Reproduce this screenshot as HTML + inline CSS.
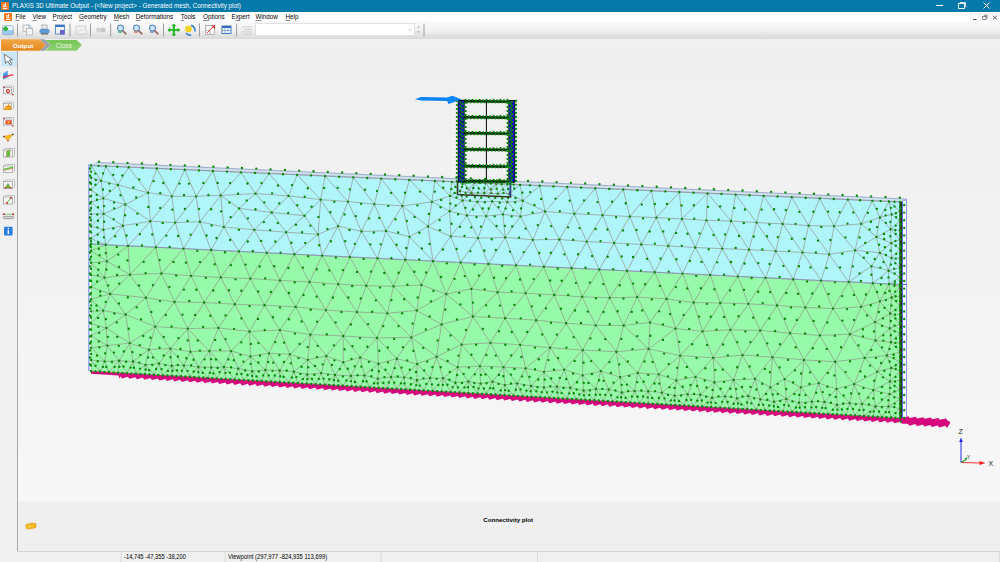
<!DOCTYPE html><html><head><meta charset="utf-8"><style>
*{margin:0;padding:0;box-sizing:border-box}
body{width:1000px;height:562px;overflow:hidden;background:#f0f0f0;font-family:"Liberation Sans",sans-serif;position:relative}
.vp{position:absolute;left:0;top:0}
.t{position:absolute;white-space:nowrap;line-height:1;font-family:"Liberation Sans",sans-serif}
u{text-decoration-color:#8a8a8a;text-decoration-thickness:0.6px;text-underline-offset:0.5px}
.ax{position:absolute;font-size:7px;line-height:1;color:#222}
</style></head><body>
<svg class="vp" width="1000" height="562" viewBox="0 0 1000 562">
<rect x="0" y="0" width="1000" height="12" fill="#0579a9"/>
<rect x="1" y="2" width="8" height="8" rx="1" fill="#f07a20"/><path d="M3 8.5h4M4 4v2.5M5.5 3.2v2.5M3.3 7.2q1.7-2 3.4 0" stroke="#fff" stroke-width="1" fill="none"/>
<path d="M936 5.5h7" stroke="#fff" stroke-width="1"/>
<rect x="958.5" y="3.5" width="6" height="5" fill="none" stroke="#fff" stroke-width="0.9"/><path d="M960 2.5h5.5v4.5" stroke="#fff" stroke-width="0.8" fill="none"/>
<path d="M983.5 2.5l6 6M989.5 2.5l-6 6" stroke="#fff" stroke-width="1"/>
<rect x="0" y="12" width="1000" height="9" fill="#ffffff"/>
<rect x="4" y="13" width="8" height="8" rx="1" fill="#f07a20"/><path d="M6 19.5h4M7 15v2.5M8.5 14.2v2.5M6.3 18.2q1.7-2 3.4 0" stroke="#fff" stroke-width="1" fill="none"/>
<rect x="970.5" y="13.5" width="8.5" height="8" fill="#fff" stroke="#e4e4e4" stroke-width="0.6"/>
<rect x="980.5" y="13.5" width="8.5" height="8" fill="#fff" stroke="#e4e4e4" stroke-width="0.6"/>
<rect x="990.5" y="13.5" width="8.5" height="8" fill="#fff" stroke="#e4e4e4" stroke-width="0.6"/>
<path d="M973 19.5h3.5" stroke="#3a4a5a" stroke-width="1"/>
<rect x="982.7" y="16.3" width="3.3" height="3.3" fill="none" stroke="#3a4a5a" stroke-width="0.7"/><path d="M983.8 15.2h3.3v3.3" fill="none" stroke="#3a4a5a" stroke-width="0.7"/>
<path d="M992.8 15.8l4 3.6M996.8 15.8l-4 3.6" stroke="#3a4a5a" stroke-width="0.9"/>
<defs><linearGradient id="tbg" x1="0" y1="0" x2="0" y2="1"><stop offset="0" stop-color="#fbfbfb"/><stop offset="0.45" stop-color="#f3f3f3"/><stop offset="1" stop-color="#d9d9d9"/></linearGradient><linearGradient id="og" x1="0" y1="0" x2="0" y2="1"><stop offset="0" stop-color="#f3a747"/><stop offset="1" stop-color="#e58a1e"/></linearGradient><linearGradient id="cg" x1="0" y1="0" x2="0" y2="1"><stop offset="0" stop-color="#76c455"/><stop offset="1" stop-color="#8fd070"/></linearGradient><linearGradient id="vbg" x1="0" y1="0" x2="0" y2="1"><stop offset="0" stop-color="#efefef"/><stop offset="1" stop-color="#f7f7f7"/></linearGradient></defs>
<rect x="0" y="21" width="1000" height="18" fill="url(#tbg)"/>
<path d="M17.5 23.5v13" stroke="#8a8a8a" stroke-width="0.8"/>
<path d="M70 23.5v13" stroke="#8a8a8a" stroke-width="0.8"/>
<path d="M90.5 23.5v13" stroke="#8a8a8a" stroke-width="0.8"/>
<path d="M110.7 23.5v13" stroke="#8a8a8a" stroke-width="0.8"/>
<path d="M163.5 23.5v13" stroke="#8a8a8a" stroke-width="0.8"/>
<path d="M199.5 23.5v13" stroke="#8a8a8a" stroke-width="0.8"/>
<path d="M236.6 23.5v13" stroke="#8a8a8a" stroke-width="0.8"/>
<path d="M424 23.5v13" stroke="#8a8a8a" stroke-width="0.8"/>
<rect x="2.5" y="25.8" width="10.8" height="9" rx="1.6" fill="#9ccaf0" stroke="#7a98b8" stroke-width="0.6"/><rect x="3" y="26.3" width="9.8" height="3.8" rx="1" fill="#eef6fc"/><path d="M2.6 28.8l3-2.8 3 2.8-3 2.8z" fill="#2cb52c"/>
<rect x="23" y="25" width="6" height="6.5" fill="#f4f4f4" stroke="#aaa" stroke-width="0.7"/><rect x="26.5" y="28.5" width="6" height="6.5" fill="#f4f4f4" stroke="#aaa" stroke-width="0.7"/><path d="M28 24.5l4 4" stroke="#5aa0e0" stroke-width="0.9"/>
<rect x="42" y="25" width="5" height="4" fill="#eee" stroke="#888" stroke-width="0.6"/><rect x="39.5" y="29" width="10" height="4.5" rx="1.5" fill="#5a9ad8"/><rect x="41" y="33" width="7" height="1.6" fill="#777"/>
<rect x="55.5" y="25" width="9" height="9" fill="#f0f4f8" stroke="#3a78c0" stroke-width="0.8"/><rect x="55.5" y="25" width="9" height="2" fill="#3a78c0"/><rect x="60" y="30" width="4.5" height="4.5" fill="#6a60c8"/>
<rect x="76" y="26" width="10" height="8" fill="#f2f2f2" stroke="#c4c4c4" stroke-width="0.7"/><path d="M77 33l3-4 2 2 3-3" stroke="#c8c8c8" stroke-width="0.6" fill="none"/>
<circle cx="98.5" cy="30" r="2.5" fill="#d4d4d4"/><circle cx="103" cy="30" r="2.5" fill="#c8c8c8"/>
<circle cx="120.5" cy="28" r="3" fill="#cfe6fa" stroke="#3c7cc0" stroke-width="1"/><path d="M122.5 30.5l3.8 3.8" stroke="#8a5a5a" stroke-width="1.6"/><path d="M118 32h4" stroke="#2aa84a" stroke-width="1.2"/>
<circle cx="136.5" cy="28" r="3" fill="#cfe6fa" stroke="#3c7cc0" stroke-width="1"/><path d="M138.5 30.5l3.8 3.8" stroke="#8a5a5a" stroke-width="1.6"/><path d="M134 32h4" stroke="#e05a2a" stroke-width="1.2"/>
<circle cx="152.5" cy="28" r="3" fill="#cfe6fa" stroke="#3c7cc0" stroke-width="1"/><path d="M154.5 30.5l3.8 3.8" stroke="#8a5a5a" stroke-width="1.6"/><path d="M150 32h4" stroke="#4a80c0" stroke-width="1.2"/>
<path d="M173.9 24.5v11M168.5 30h11" stroke="#2fb82f" stroke-width="2.2"/><path d="M171.5 26l2.4-2.4 2.4 2.4zM171.5 34l2.4 2.4 2.4-2.4zM170 27.6l-2.4 2.4 2.4 2.4zM177.8 27.6l2.4 2.4-2.4 2.4z" fill="#2fb82f"/>
<path d="M191 25.5a5 5 0 0 1 4 6" stroke="#3a8ad8" stroke-width="1.8" fill="none"/><path d="M186 33a5 5 0 0 0 5 2" stroke="#3a8ad8" stroke-width="1.8" fill="none"/><circle cx="188.5" cy="29" r="3.3" fill="#f2d020"/>
<rect x="205.5" y="25.5" width="9" height="9" fill="#f6f6f6" stroke="#999" stroke-width="0.7"/><path d="M205.5 30.5h4.5v4" stroke="#999" stroke-width="0.6" fill="none"/><path d="M207 33l7-7" stroke="#e02020" stroke-width="0.9"/><path d="M211.5 25.5h3.5v3.5z" fill="#e02020"/>
<rect x="222" y="26" width="9" height="7.5" fill="#fff" stroke="#2f6db8" stroke-width="0.9"/><rect x="222" y="26" width="9" height="2" fill="#2f6db8"/><path d="M222 30.5h9M225 28v5.5M228 28v5.5" stroke="#2f6db8" stroke-width="0.5"/>
<path d="M242 27h10M244 29.5h8M242 32h10M244 34.5h8" stroke="#cdcdcd" stroke-width="1.1"/>
<rect x="255.5" y="23.5" width="159" height="12" fill="#fff" stroke="#d8d8d8" stroke-width="0.7"/>
<path d="M408 29l2 1.8 2-1.8" stroke="#b4b4b4" stroke-width="0.6" fill="none"/>
<path d="M417.2 27.5l1.3-1.3 1.3 1.3zM417.2 31.5l1.3 1.3 1.3-1.3z" fill="#8a8a8a"/>
<rect x="0" y="39" width="1000" height="12" fill="#f0f0f0"/>
<rect x="18" y="51" width="982" height="450" fill="url(#vbg)"/>
<rect x="18" y="501" width="982" height="50" fill="#efefef"/>
<path d="M17.5 51v501" stroke="#a0a0a0" stroke-width="0.9"/>
<path d="M17 551.5h983" stroke="#d4d4d4" stroke-width="1"/>
<path d="M26 524.5l6-1.5 4 0.5v4l-6 1.5-4-0.5z" fill="#f6b820" stroke="#e08a10" stroke-width="0.5"/><path d="M28 526.5h3" stroke="#fff6a0" stroke-width="0.7"/>
<path d="M121 552v10" stroke="#d8d8d8" stroke-width="0.9"/>
<path d="M225.2 552v10" stroke="#d8d8d8" stroke-width="0.9"/>
<path d="M381 552v10" stroke="#d8d8d8" stroke-width="0.9"/>
<path d="M537.5 552v10" stroke="#d8d8d8" stroke-width="0.9"/>
<path d="M999.3 552v10" stroke="#d8d8d8" stroke-width="0.9"/>
<path d="M1 39.2h38.6l6.3 5.8-6.3 5.8H1z" fill="url(#og)"/>
<path d="M39.6 39.2h5l6 5.8-6 5.8h-5l6.3-5.8z" fill="#9aa0aa"/>
<path d="M45.5 40h31l5.4 5-5.4 5.8h-31l5.2-5.8z" fill="url(#cg)"/>
<rect x="1" y="52" width="16" height="14.5" fill="#cce6fa"/>
<path d="M4.3 54.3l1.2 9.2 2.2-2.4 2.6 3.9 1.6-1-2.6-3.9 3.1-0.6z" fill="#fafafa" stroke="#5a5a5a" stroke-width="0.8"/>
<path d="M3.2 73.5l4.5-2.8v6.5l-4.5 2.3z" fill="#3a8ae0"/><path d="M3.2 73.5l4.5-2.8v2l-4.5 2.2z" fill="#70b0f0"/><path d="M3 77.3l10.3-2.6" stroke="#e8304a" stroke-width="1.2"/>
<path d="M3.5 87.5l2-1.5h8v6.0l-2 1.5" fill="#fbfbfb" stroke="#9a9a9a" stroke-width="0.6"/><rect x="3.5" y="87.5" width="8" height="6.0" fill="#f6f6f6" stroke="#8a8a8a" stroke-width="0.6"/>
<circle cx="8" cy="91" r="1.5" fill="none" stroke="#e01818" stroke-width="1.1"/><circle cx="4" cy="87" r="0.8" fill="#a01818"/><path d="M11.5 94l1.5 1.5 1-1.5z" fill="#c01818"/>
<path d="M3.5 103.5l2-1.5h8v6.0l-2 1.5" fill="#fbfbfb" stroke="#9a9a9a" stroke-width="0.6"/><rect x="3.5" y="103.5" width="8" height="6.0" fill="#f6f6f6" stroke="#8a8a8a" stroke-width="0.6"/>
<path d="M3.8 110l1.5-3.5 2-1 1.5-1.8 0.8 1.8 1.5 0.5v4z" fill="#f29a18"/><path d="M6 108.5l2-1.5 1.5 1.5z" fill="#f8d040"/>
<path d="M3.5 119.0l2-1.5h8v6.0l-2 1.5" fill="#fbfbfb" stroke="#9a9a9a" stroke-width="0.6"/><rect x="3.5" y="119.0" width="8" height="6.0" fill="#f6f6f6" stroke="#8a8a8a" stroke-width="0.6"/>
<rect x="5.5" y="120.3" width="6" height="4" fill="#f03a2a"/><ellipse cx="8.5" cy="122.3" rx="1.8" ry="1.1" fill="#f8c030"/><circle cx="4" cy="118.3" r="0.8" fill="#a01818"/><circle cx="12.8" cy="126" r="0.8" fill="#a01818"/>
<path d="M3.8 136.6l9-2.2-4.8 6.3z" fill="#f6c21a" stroke="#e88a10" stroke-width="0.6"/><circle cx="3.8" cy="136.6" r="0.8" fill="#333"/><circle cx="12.8" cy="134.4" r="0.8" fill="#333"/><circle cx="8" cy="140.8" r="0.8" fill="#c01818"/>
<path d="M3.5 150.0l2-1.5h9v7.0l-2 1.5" fill="#fbfbfb" stroke="#9a9a9a" stroke-width="0.6"/><rect x="3.5" y="150.0" width="9" height="7.0" fill="#f6f6f6" stroke="#8a8a8a" stroke-width="0.6"/>
<path d="M6.5 151l3.5-1v6l-3.5 1z" fill="#58c838" stroke="#d04040" stroke-width="0.3"/>
<path d="M3.5 166.0l2-1.5h9v6.5l-2 1.5" fill="#fbfbfb" stroke="#9a9a9a" stroke-width="0.6"/><rect x="3.5" y="166.0" width="9" height="6.5" fill="#f6f6f6" stroke="#8a8a8a" stroke-width="0.6"/>
<path d="M3.8 169.5l9.5-2.3" stroke="#58c838" stroke-width="1.3"/><path d="M3.8 170.6l9.5-2.3" stroke="#d05030" stroke-width="0.5"/>
<path d="M3.5 181.5l2-1.5h9v7.0l-2 1.5" fill="#fbfbfb" stroke="#9a9a9a" stroke-width="0.6"/><rect x="3.5" y="181.5" width="9" height="7.0" fill="#f6f6f6" stroke="#8a8a8a" stroke-width="0.6"/>
<path d="M5 188l3-4.5 3 4.5z" fill="#58c838" stroke="#c03030" stroke-width="0.4"/><circle cx="5" cy="188" r="0.7" fill="#c01818"/><circle cx="11" cy="188" r="0.7" fill="#c01818"/>
<path d="M3.5 197.0l2-1.5h9v7.0l-2 1.5" fill="#fbfbfb" stroke="#9a9a9a" stroke-width="0.6"/><rect x="3.5" y="197.0" width="9" height="7.0" fill="#f6f6f6" stroke="#8a8a8a" stroke-width="0.6"/>
<path d="M7 203l4-5" stroke="#48b838" stroke-width="0.9"/><circle cx="7" cy="203" r="0.9" fill="#d01818"/><circle cx="11" cy="198" r="0.9" fill="#d01818"/>
<path d="M3.5 214.2h10" stroke="#70c060" stroke-width="0.8"/><circle cx="3.8" cy="214.2" r="0.9" fill="#d01818"/><circle cx="13.2" cy="214.2" r="0.9" fill="#d01818"/><rect x="3.3" y="216.3" width="10.4" height="2.4" rx="1.2" fill="#d8d8d8" stroke="#707070" stroke-width="0.6"/>
<rect x="4" y="226.8" width="8.6" height="8.8" rx="0.8" fill="#2a7fe0"/><path d="M8.3 230v4" stroke="#fff" stroke-width="1.3"/><circle cx="8.3" cy="228.6" r="0.75" fill="#fff"/>
<polygon points="91,369.8 903,417.2 908.5,416.3 909.5,418 916,416.7 917,418.4 923.5,417.2 924.5,418.8 931,417.6 932,419.3 938.5,418 939.5,419.7 946,418.5 947,420.1 950.5,422.5 947,427.9 945.2,425.8 939.5,427.5 937.7,425.4 932,427.1 930.2,425 924.5,426.6 922.7,424.5 917,426.2 915.2,424.1 909.5,425.8 907.7,423.7 902,423.7 900.2,421.6 894.5,423.3 892.7,421.2 887,422.8 885.2,420.7 879.5,422.4 877.7,420.3 872,422 870.2,419.9 864.5,421.5 862.7,419.4 857,421.1 855.2,419 849.5,420.7 847.7,418.6 842,420.2 840.2,418.1 834.5,419.8 832.7,417.7 827,419.4 825.2,417.3 819.5,418.9 817.7,416.8 812,418.5 810.2,416.4 804.5,418.1 802.7,415.9 797,417.6 795.2,415.5 789.5,417.2 787.7,415.1 782,416.7 780.2,414.6 774.5,416.3 772.7,414.2 767,415.9 765.2,413.8 759.5,415.4 757.7,413.3 752,415 750.2,412.9 744.5,414.6 742.7,412.5 737,414.1 735.2,412 729.5,413.7 727.7,411.6 722,413.3 720.2,411.2 714.5,412.8 712.7,410.7 707,412.4 705.2,410.3 699.5,412 697.7,409.8 692,411.5 690.2,409.4 684.5,411.1 682.7,409 677,410.6 675.2,408.5 669.5,410.2 667.7,408.1 662,409.8 660.2,407.7 654.5,409.3 652.7,407.2 647,408.9 645.2,406.8 639.5,408.5 637.7,406.4 632,408 630.2,405.9 624.5,407.6 622.7,405.5 617,407.2 615.2,405.1 609.5,406.7 607.7,404.6 602,406.3 600.2,404.2 594.5,405.9 592.7,403.7 587,405.4 585.2,403.3 579.5,405 577.7,402.9 572,404.5 570.2,402.4 564.5,404.1 562.7,402 557,403.7 555.2,401.6 549.5,403.2 547.7,401.1 542,402.8 540.2,400.7 534.5,402.4 532.7,400.3 527,401.9 525.2,399.8 519.5,401.5 517.7,399.4 512,401.1 510.2,399 504.5,400.6 502.7,398.5 497,400.2 495.2,398.1 489.5,399.8 487.7,397.6 482,399.3 480.2,397.2 474.5,398.9 472.7,396.8 467,398.4 465.2,396.3 459.5,398 457.7,395.9 452,397.6 450.2,395.5 444.5,397.1 442.7,395 437,396.7 435.2,394.6 429.5,396.3 427.7,394.2 422,395.8 420.2,393.7 414.5,395.4 412.7,393.3 407,395 405.2,392.9 399.5,394.5 397.7,392.4 392,394.1 390.2,392 384.5,393.7 382.7,391.5 377,393.2 375.2,391.1 369.5,392.8 367.7,390.7 362,392.3 360.2,390.2 354.5,391.9 352.7,389.8 347,391.5 345.2,389.4 339.5,391 337.7,388.9 332,390.6 330.2,388.5 324.5,390.2 322.7,388.1 317,389.7 315.2,387.6 309.5,389.3 307.7,387.2 302,388.9 300.2,386.8 294.5,388.4 292.7,386.3 287,388 285.2,385.9 279.5,387.6 277.7,385.4 272,387.1 270.2,385 264.5,386.7 262.7,384.6 257,386.2 255.2,384.1 249.5,385.8 247.7,383.7 242,385.4 240.2,383.3 234.5,384.9 232.7,382.8 227,384.5 225.2,382.4 219.5,384.1 217.7,382 212,383.6 210.2,381.5 204.5,383.2 202.7,381.1 197,382.8 195.2,380.7 189.5,382.3 187.7,380.2 182,381.9 180.2,379.8 174.5,381.5 172.7,379.3 167,381 165.2,378.9 159.5,380.6 157.7,378.5 152,380.1 150.2,378 144.5,379.7 142.7,377.6 137,379.3 135.2,377.2 129.5,378.8 127.7,376.7 122,378.4 120.2,376.3 119.5,378.7 118.5,375.6 91,373.8" fill="#d6077c"/>
<polygon points="91,165.5 900,202 900,284.512 91,244.001" fill="#b0f5fa"/>
<polygon points="91,244.001 900,284.512 900,418 91,371" fill="#97faaa"/>
<path d="M91 165.5L105.9 166.2M91 165.5L91 177.7M91 165.5L101.1 180.8M105.9 166.2L128.7 167.2M105.9 166.2L101.1 180.8M105.9 166.2L117.9 185M128.7 167.2L156.8 168.5M128.7 167.2L117.9 185M128.7 167.2L148.1 192.7M156.8 168.5L184.8 169.7M156.8 168.5L148.1 192.7M156.8 168.5L171.9 196.3M184.8 169.7L212.9 171M184.8 169.7L196.1 196.3M184.8 169.7L171.9 196.3M212.9 171L240.9 172.3M212.9 171L196.1 196.3M212.9 171L220.7 195.4M240.9 172.3L269 173.5M240.9 172.3L255.5 193.6M240.9 172.3L220.7 195.4M269 173.5L297.1 174.8M269 173.5L288.5 195.9M269 173.5L255.5 193.6M297.1 174.8L325.1 176.1M297.1 174.8L320.7 199.6M297.1 174.8L288.5 195.9M325.1 176.1L353.2 177.3M325.1 176.1L320.7 199.6M325.1 176.1L348 201.6M353.2 177.3L381.2 178.6M353.2 177.3L348 201.6M353.2 177.3L374.3 204.1M381.2 178.6L409.3 179.9M381.2 178.6L374.3 204.1M381.2 178.6L402.4 205.9M409.3 179.9L434.9 181M409.3 179.9L431.9 201.8M409.3 179.9L402.4 205.9M434.9 181L451.8 181.8M434.9 181L431.9 201.8M434.9 181L449.9 195.9M451.8 181.8L463.3 182.3M451.8 181.8L449.9 195.9M451.8 181.8L460 191.1M463.3 182.3L474.3 182.8M463.3 182.3L471.5 193M463.3 182.3L460 191.1M474.3 182.8L485.4 183.3M474.3 182.8L471.5 193M474.3 182.8L484.2 193.1M485.4 183.3L496.4 183.8M485.4 183.3L484.2 193.1M496.4 183.8L507.4 184.3M496.4 183.8L484.2 193.1M496.4 183.8L497.7 193.6M507.4 184.3L520.1 184.9M507.4 184.3L497.7 193.6M507.4 184.3L509.4 193.6M520.1 184.9L539.7 185.7M520.1 184.9L509.4 193.6M520.1 184.9L522.7 200.7M539.7 185.7L567.2 187M539.7 185.7L545.1 211.5M539.7 185.7L522.7 200.7M567.2 187L595.3 188.3M567.2 187L545.1 211.5M567.2 187L574.3 213.7M595.3 188.3L623.3 189.5M595.3 188.3L602.5 215.2M595.3 188.3L574.3 213.7M623.3 189.5L651.4 190.8M623.3 189.5L629.8 216.5M623.3 189.5L602.5 215.2M651.4 190.8L679.4 192M651.4 190.8L629.8 216.5M651.4 190.8L656.4 217.6M679.4 192L707.5 193.3M679.4 192L656.4 217.6M679.4 192L681.9 218.9M707.5 193.3L735.6 194.6M707.5 193.3L731 221M707.5 193.3L706.4 220.3M707.5 193.3L681.9 218.9M735.6 194.6L763.6 195.8M735.6 194.6L731 221M735.6 194.6L756.6 222.6M763.6 195.8L791.7 197.1M763.6 195.8L782.6 223.9M763.6 195.8L756.6 222.6M791.7 197.1L819.7 198.4M791.7 197.1L808.6 225.6M791.7 197.1L782.6 223.9M819.7 198.4L847.8 199.6M819.7 198.4L808.6 225.6M819.7 198.4L834 226.1M847.8 199.6L872.3 200.8M847.8 199.6L861.2 223.8M847.8 199.6L834 226.1M872.3 200.8L888.9 201.5M872.3 200.8L879.9 217.5M872.3 200.8L861.2 223.8M888.9 201.5L900 202M888.9 201.5L900 211.4M888.9 201.5L879.9 217.5M888.9 201.5L891.6 214.4M900 202L900 211.4M91 371L100 371.5M91 371L91 360M100 371.5L109 372M100 371.5L91 360M100 371.5L104.7 361.4M109 372L118 372.6M109 372L104.7 361.4M109 372L119.2 360.7M118 372.6L127 373.1M118 372.6L119.2 360.7M127 373.1L135.9 373.6M127 373.1L119.2 360.7M127 373.1L133 361.5M135.9 373.6L144.9 374.1M135.9 373.6L133 361.5M135.9 373.6L145.4 364.8M144.9 374.1L153.9 374.7M144.9 374.1L145.4 364.8M153.9 374.7L162.9 375.2M153.9 374.7L145.4 364.8M153.9 374.7L159 363.5M162.9 375.2L171.9 375.7M162.9 375.2L171.7 365.7M162.9 375.2L159 363.5M171.9 375.7L180.9 376.2M171.9 375.7L171.7 365.7M180.9 376.2L189.9 376.7M180.9 376.2L171.7 365.7M180.9 376.2L183.9 365.4M189.9 376.7L198.9 377.3M189.9 376.7L198.3 366.9M189.9 376.7L183.9 365.4M198.9 377.3L207.9 377.8M198.9 377.3L198.3 366.9M207.9 377.8L216.8 378.3M207.9 377.8L198.3 366.9M207.9 377.8L211.2 367.4M216.8 378.3L225.8 378.8M216.8 378.3L211.2 367.4M216.8 378.3L223.9 367M225.8 378.8L234.8 379.4M225.8 378.8L223.9 367M234.8 379.4L243.8 379.9M234.8 379.4L223.9 367M234.8 379.4L238.2 368.6M243.8 379.9L252.8 380.4M243.8 379.9L252.2 371.2M243.8 379.9L238.2 368.6M252.8 380.4L261.8 380.9M252.8 380.4L252.2 371.2M261.8 380.9L270.8 381.4M261.8 380.9L252.2 371.2M261.8 380.9L265.4 370M270.8 381.4L279.8 382M270.8 381.4L279.6 370.5M270.8 381.4L265.4 370M279.8 382L288.8 382.5M279.8 382L279.6 370.5M288.8 382.5L297.7 383M288.8 382.5L279.6 370.5M288.8 382.5L293.8 371.7M297.7 383L306.7 383.5M297.7 383L293.8 371.7M297.7 383L307.3 374.4M306.7 383.5L315.7 384.1M306.7 383.5L307.3 374.4M315.7 384.1L324.7 384.6M315.7 384.1L307.3 374.4M315.7 384.1L321.2 373.1M324.7 384.6L333.7 385.1M324.7 384.6L321.2 373.1M324.7 384.6L335 375M333.7 385.1L342.7 385.6M333.7 385.1L335 375M342.7 385.6L351.7 386.1M342.7 385.6L335 375M342.7 385.6L350.9 375.9M351.7 386.1L360.7 386.7M351.7 386.1L350.9 375.9M360.7 386.7L369.7 387.2M360.7 386.7L350.9 375.9M360.7 386.7L364.4 375.3M369.7 387.2L378.6 387.7M369.7 387.2L364.4 375.3M369.7 387.2L377.8 378.6M378.6 387.7L387.6 388.2M378.6 387.7L377.8 378.6M387.6 388.2L396.6 388.8M387.6 388.2L377.8 378.6M387.6 388.2L391.1 377M396.6 388.8L405.6 389.3M396.6 388.8L404.2 377.3M396.6 388.8L391.1 377M405.6 389.3L414.6 389.8M405.6 389.3L404.2 377.3M405.6 389.3L417 380.2M414.6 389.8L423.6 390.3M414.6 389.8L417 380.2M423.6 390.3L432.6 390.8M423.6 390.3L430.1 378M423.6 390.3L417 380.2M432.6 390.8L441.6 391.4M432.6 390.8L430.1 378M432.6 390.8L443 378.1M441.6 391.4L450.6 391.9M441.6 391.4L443 378.1M450.6 391.9L459.5 392.4M450.6 391.9L443 378.1M450.6 391.9L455.4 382.7M459.5 392.4L468.5 392.9M459.5 392.4L468.4 381.4M459.5 392.4L455.4 382.7M468.5 392.9L477.5 393.5M468.5 392.9L468.4 381.4M477.5 393.5L486.5 394M477.5 393.5L468.4 381.4M477.5 393.5L480.5 383.5M486.5 394L495.5 394.5M486.5 394L480.5 383.5M486.5 394L492.6 381.6M495.5 394.5L504.5 395M495.5 394.5L492.6 381.6M495.5 394.5L504.9 385.1M504.5 395L513.5 395.5M504.5 395L504.9 385.1M513.5 395.5L522.5 396.1M513.5 395.5L504.9 385.1M513.5 395.5L517.2 383.4M522.5 396.1L531.5 396.6M522.5 396.1L531.1 385.9M522.5 396.1L517.2 383.4M531.5 396.6L540.4 397.1M531.5 396.6L531.1 385.9M540.4 397.1L549.4 397.6M540.4 397.1L531.1 385.9M540.4 397.1L543.9 387.4M549.4 397.6L558.4 398.2M549.4 397.6L543.9 387.4M549.4 397.6L556.9 386.6M558.4 398.2L567.4 398.7M558.4 398.2L556.9 386.6M567.4 398.7L576.4 399.2M567.4 398.7L556.9 386.6M567.4 398.7L570.2 387.7M576.4 399.2L585.4 399.7M576.4 399.2L570.2 387.7M576.4 399.2L583.5 390.4M585.4 399.7L594.4 400.2M585.4 399.7L583.5 390.4M594.4 400.2L603.4 400.8M594.4 400.2L583.5 390.4M594.4 400.2L595.9 389M603.4 400.8L612.4 401.3M603.4 400.8L595.9 389M603.4 400.8L608.7 389.5M612.4 401.3L621.3 401.8M612.4 401.3L608.7 389.5M612.4 401.3L621.8 392.5M621.3 401.8L630.3 402.3M621.3 401.8L621.8 392.5M630.3 402.3L639.3 402.9M630.3 402.3L621.8 392.5M630.3 402.3L634.6 390.9M639.3 402.9L648.3 403.4M639.3 402.9L648.2 391.2M639.3 402.9L634.6 390.9M648.3 403.4L657.3 403.9M648.3 403.4L648.2 391.2M657.3 403.9L666.3 404.4M657.3 403.9L648.2 391.2M657.3 403.9L661.8 392.6M666.3 404.4L675.3 404.9M666.3 404.4L661.8 392.6M666.3 404.4L674.6 395.6M675.3 404.9L684.3 405.5M675.3 404.9L674.6 395.6M684.3 405.5L693.3 406M684.3 405.5L687.6 394.2M684.3 405.5L674.6 395.6M693.3 406L702.2 406.5M693.3 406L687.6 394.2M693.3 406L700.3 394.7M702.2 406.5L711.2 407M702.2 406.5L700.3 394.7M702.2 406.5L712.1 397.7M711.2 407L720.2 407.6M711.2 407L712.1 397.7M720.2 407.6L729.2 408.1M720.2 407.6L712.1 397.7M720.2 407.6L725 396.3M729.2 408.1L738.2 408.6M729.2 408.1L725 396.3M729.2 408.1L737.1 398.3M738.2 408.6L747.2 409.1M738.2 408.6L737.1 398.3M747.2 409.1L756.2 409.6M747.2 409.1L748.3 395.9M747.2 409.1L737.1 398.3M756.2 409.6L765.2 410.2M756.2 409.6L748.3 395.9M756.2 409.6L760.3 399.3M765.2 410.2L774.2 410.7M765.2 410.2L760.3 399.3M765.2 410.2L774.1 401.7M774.2 410.7L783.1 411.2M774.2 410.7L774.1 401.7M783.1 411.2L792.1 411.7M783.1 411.2L774.1 401.7M783.1 411.2L786.3 398.9M792.1 411.7L801.1 412.3M792.1 411.7L799 402.6M792.1 411.7L786.3 398.9M801.1 412.3L810.1 412.8M801.1 412.3L799 402.6M810.1 412.8L819.1 413.3M810.1 412.8L799 402.6M810.1 412.8L811.9 401.6M819.1 413.3L828.1 413.8M819.1 413.3L824.4 401.9M819.1 413.3L811.9 401.6M828.1 413.8L837.1 414.3M828.1 413.8L824.4 401.9M828.1 413.8L837 404.9M837.1 414.3L846.1 414.9M837.1 414.3L837 404.9M846.1 414.9L855.1 415.4M846.1 414.9L837 404.9M846.1 414.9L849.6 403.1M855.1 415.4L864 415.9M855.1 415.4L862.1 403.9M855.1 415.4L849.6 403.1M864 415.9L873 416.4M864 415.9L862.1 403.9M864 415.9L875.4 406.5M873 416.4L882 417M873 416.4L875.4 406.5M882 417L891 417.5M882 417L875.4 406.5M882 417L888.5 406.4M891 417.5L900 418M891 417.5L900 408.6M891 417.5L888.5 406.4M900 418L900 408.6M91 177.7L91 189.8M91 177.7L101.1 180.8M91 189.8L91 202M91 189.8L101.1 180.8M91 189.8L103.3 198.4M91 202L91 214.1M91 202L103.3 198.4M91 202L103.7 213.8M91 214.1L91 226.3M91 214.1L103.7 213.8M91 226.3L91 238.4M91 226.3L103.5 229.7M91 226.3L103.7 213.8M91 238.4L91 244M91 238.4L105.7 244.7M91 238.4L103.5 229.7M91 250.6L91 262.7M91 250.6L91 244M91 250.6L105.7 244.7M91 250.6L107 261.3M91 262.7L91 274.9M91 262.7L107 261.3M91 262.7L104.5 277.6M91 274.9L91 287M91 274.9L104.5 277.6M91 287L91 299.2M91 287L104.5 277.6M91 287L110.2 293.9M91 299.2L91 311.3M91 299.2L110.2 293.9M91 299.2L103.2 310.6M91 311.3L91 323.5M91 311.3L103.2 310.6M91 323.5L91 335.7M91 323.5L103.2 310.6M91 323.5L106.4 328.1M91 335.7L91 347.8M91 335.7L106.4 328.1M91 335.7L107.4 345.6M91 347.8L91 360M91 347.8L107.4 345.6M91 347.8L104.7 361.4M91 360L104.7 361.4M900 211.4L900 220.8M900 211.4L891.6 214.4M900 220.8L900 230.2M900 220.8L891.6 214.4M900 220.8L890.6 229.2M900 230.2L900 239.6M900 230.2L890.6 229.2M900 239.6L900 249M900 239.6L890.6 229.2M900 239.6L891.2 243.1M900 249L900 258.3M900 249L891.2 243.1M900 249L891.5 258M900 258.3L900 267.7M900 258.3L891.5 258M900 267.7L900 277.1M900 267.7L891.5 258M900 267.7L888.6 270.7M900 277.1L889.1 284M900 277.1L900 284.5M900 277.1L888.6 270.7M900 286.5L900 295.9M900 286.5L889.1 284M900 286.5L900 284.5M900 286.5L891.5 297.5M900 295.9L900 305.3M900 295.9L891.5 297.5M900 305.3L900 314.7M900 305.3L891.5 297.5M900 305.3L890.1 313.5M900 314.7L900 324.1M900 314.7L890.1 313.5M900 324.1L900 333.5M900 324.1L890.1 313.5M900 324.1L889.7 328.3M900 333.5L900 342.9M900 333.5L889.7 328.3M900 333.5L890.9 342.2M900 342.9L900 352.3M900 342.9L890.9 342.2M900 352.3L900 361.7M900 352.3L890.9 342.2M900 352.3L886.9 355.4M900 361.7L900 371M900 361.7L886.9 355.4M900 361.7L891.2 368M900 371L900 380.4M900 371L891.2 368M900 371L889.9 381.5M900 380.4L900 389.8M900 380.4L889.9 381.5M900 389.8L900 399.2M900 389.8L889.9 381.5M900 389.8L889.5 394M900 399.2L900 408.6M900 399.2L889.5 394M900 399.2L888.5 406.4M900 408.6L888.5 406.4M91 244L105.7 244.7M105.7 244.7L128.1 245.9M105.7 244.7L103.5 229.7M105.7 244.7L122.9 225.7M105.7 244.7L107 261.3M128.1 245.9L155.8 247.2M128.1 245.9L150.4 221.2M128.1 245.9L122.9 225.7M128.1 245.9L107 261.3M128.1 245.9L129.9 274.7M155.8 247.2L183.5 248.6M155.8 247.2L150.4 221.2M155.8 247.2L175.2 222.6M155.8 247.2L129.9 274.7M155.8 247.2L161.4 273.4M183.5 248.6L211.2 250M183.5 248.6L175.2 222.6M183.5 248.6L199.9 221.7M183.5 248.6L191.1 275.8M183.5 248.6L161.4 273.4M211.2 250L238.9 251.4M211.2 250L223.8 227M211.2 250L199.9 221.7M211.2 250L191.1 275.8M211.2 250L220.8 277.4M238.9 251.4L266.7 252.8M238.9 251.4L223.8 227M238.9 251.4L254.3 229.8M238.9 251.4L220.8 277.4M238.9 251.4L250.3 278.6M266.7 252.8L294.4 254.2M266.7 252.8L286.1 232.2M266.7 252.8L254.3 229.8M266.7 252.8L250.3 278.6M266.7 252.8L279.9 280.4M294.4 254.2L322.1 255.6M294.4 254.2L286.1 232.2M294.4 254.2L318 234.4M294.4 254.2L279.9 280.4M294.4 254.2L309.5 282M322.1 255.6L349.8 257M322.1 255.6L338.1 226.1M322.1 255.6L318 234.4M322.1 255.6L338.2 284.2M322.1 255.6L309.5 282M349.8 257L377.5 258.3M349.8 257L338.1 226.1M349.8 257L361.5 231.4M349.8 257L366.3 285.7M349.8 257L338.2 284.2M377.5 258.3L405.3 259.7M377.5 258.3L361.5 231.4M377.5 258.3L386 230.9M377.5 258.3L366.3 285.7M377.5 258.3L393.5 286.3M405.3 259.7L433 261.1M405.3 259.7L409.5 236.8M405.3 259.7L386 230.9M405.3 259.7L421.4 285M405.3 259.7L393.5 286.3M433 261.1L460.7 262.5M433 261.1L450.8 236.3M433 261.1L409.5 236.8M433 261.1L428 226.4M433 261.1L421.4 285M433 261.1L446.3 294.1M460.7 262.5L488.4 263.9M460.7 262.5L450.8 236.3M460.7 262.5L478 238.1M460.7 262.5L446.3 294.1M460.7 262.5L471.4 288.8M488.4 263.9L516.1 265.3M488.4 263.9L478 238.1M488.4 263.9L497.6 292.2M488.4 263.9L505.2 237.4M488.4 263.9L471.4 288.8M516.1 265.3L543.9 266.7M516.1 265.3L497.6 292.2M516.1 265.3L505.2 237.4M516.1 265.3L532.8 239.8M516.1 265.3L525.6 293.1M543.9 266.7L571.6 268.1M543.9 266.7L559.4 239.5M543.9 266.7L532.8 239.8M543.9 266.7L525.6 293.1M543.9 266.7L554.2 294.9M571.6 268.1L599.3 269.5M571.6 268.1L559.4 239.5M571.6 268.1L586.7 241.6M571.6 268.1L554.2 294.9M571.6 268.1L582.2 296.8M599.3 269.5L627 270.8M599.3 269.5L586.7 241.6M599.3 269.5L614.1 243M599.3 269.5L582.2 296.8M599.3 269.5L609.7 297.8M627 270.8L654.7 272.2M627 270.8L641.3 244.4M627 270.8L614.1 243M627 270.8L637.2 297.1M627 270.8L609.7 297.8M654.7 272.2L682.5 273.6M654.7 272.2L641.3 244.4M654.7 272.2L668.3 245.9M654.7 272.2L637.2 297.1M654.7 272.2L666.6 298.9M682.5 273.6L710.2 275M682.5 273.6L695.3 247.5M682.5 273.6L668.3 245.9M682.5 273.6L666.6 298.9M682.5 273.6L693.6 302.5M710.2 275L737.9 276.4M710.2 275L695.3 247.5M710.2 275L722.2 248.6M710.2 275L720.3 303M710.2 275L693.6 302.5M737.9 276.4L765.6 277.8M737.9 276.4L748.9 249.7M737.9 276.4L722.2 248.6M737.9 276.4L720.3 303M737.9 276.4L748.3 303.8M765.6 277.8L793.3 279.2M765.6 277.8L775.7 251.1M765.6 277.8L748.9 249.7M765.6 277.8L748.3 303.8M765.6 277.8L777 305.5M793.3 279.2L821.1 280.6M793.3 279.2L775.7 251.1M793.3 279.2L802.5 252.4M793.3 279.2L805.3 307.4M793.3 279.2L777 305.5M821.1 280.6L848.8 281.9M821.1 280.6L829.2 254.4M821.1 280.6L802.5 252.4M821.1 280.6L832.9 308.6M821.1 280.6L805.3 307.4M848.8 281.9L872.8 283.2M848.8 281.9L829.2 254.4M848.8 281.9L855 250.3M848.8 281.9L871.5 266.2M848.8 281.9L832.9 308.6M848.8 281.9L861.1 306.8M872.8 283.2L889.1 284M872.8 283.2L871.5 266.2M872.8 283.2L888.6 270.7M872.8 283.2L861.1 306.8M872.8 283.2L879.9 301.3M889.1 284L900 284.5M889.1 284L888.6 270.7M889.1 284L879.9 301.3M889.1 284L891.5 297.5M101.1 180.8L117.9 185M101.1 180.8L103.3 198.4M117.9 185L148.1 192.7M117.9 185L125.4 204.5M117.9 185L103.3 198.4M148.1 192.7L125.4 204.5M148.1 192.7L150.4 221.2M148.1 192.7L171.9 196.3M196.1 196.3L171.9 196.3M196.1 196.3L220.7 195.4M196.1 196.3L175.2 222.6M196.1 196.3L199.9 221.7M320.7 199.6L288.5 195.9M320.7 199.6L304.5 215.7M320.7 199.6L348 201.6M320.7 199.6L338.1 226.1M320.7 199.6L318 234.4M431.9 201.8L449.9 195.9M431.9 201.8L402.4 205.9M431.9 201.8L449.7 211.2M431.9 201.8L428 226.4M449.9 195.9L462.5 200.6M449.9 195.9L460 191.1M449.9 195.9L449.7 211.2M471.5 193L484.2 193.1M471.5 193L462.5 200.6M471.5 193L460 191.1M471.5 193L477.4 201.9M484.2 193.1L497.7 193.6M484.2 193.1L492.1 201.4M484.2 193.1L477.4 201.9M497.7 193.6L509.4 193.6M497.7 193.6L492.1 201.4M497.7 193.6L507.4 202.1M509.4 193.6L507.4 202.1M509.4 193.6L522.7 200.7M545.1 211.5L574.3 213.7M545.1 211.5L522.7 200.7M545.1 211.5L520.5 216.4M545.1 211.5L559.4 239.5M545.1 211.5L532.8 239.8M629.8 216.5L602.5 215.2M629.8 216.5L656.4 217.6M629.8 216.5L641.3 244.4M629.8 216.5L614.1 243M125.4 204.5L150.4 221.2M125.4 204.5L103.3 198.4M125.4 204.5L103.7 213.8M125.4 204.5L122.9 225.7M150.4 221.2L171.9 196.3M150.4 221.2L175.2 222.6M150.4 221.2L122.9 225.7M288.5 195.9L255.5 193.6M288.5 195.9L304.5 215.7M288.5 195.9L271.7 212.5M462.5 200.6L460 191.1M462.5 200.6L477.4 201.9M462.5 200.6L449.7 211.2M462.5 200.6L466.9 215.5M492.1 201.4L507.4 202.1M492.1 201.4L477.4 201.9M492.1 201.4L486.2 216.1M492.1 201.4L503 214.4M507.4 202.1L522.7 200.7M507.4 202.1L520.5 216.4M507.4 202.1L503 214.4M602.5 215.2L574.3 213.7M602.5 215.2L586.7 241.6M602.5 215.2L614.1 243M731 221L756.6 222.6M731 221L706.4 220.3M731 221L748.9 249.7M731 221L722.2 248.6M808.6 225.6L782.6 223.9M808.6 225.6L834 226.1M808.6 225.6L829.2 254.4M808.6 225.6L802.5 252.4M879.9 217.5L891.6 214.4M879.9 217.5L861.2 223.8M879.9 217.5L890.6 229.2M879.9 217.5L876.4 236.9M891.6 214.4L890.6 229.2M103.3 198.4L103.7 213.8M255.5 193.6L220.7 195.4M255.5 193.6L271.7 212.5M255.5 193.6L239.1 208.4M304.5 215.7L271.7 212.5M304.5 215.7L286.1 232.2M304.5 215.7L318 234.4M348 201.6L374.3 204.1M348 201.6L338.1 226.1M348 201.6L361.5 231.4M477.4 201.9L486.2 216.1M477.4 201.9L466.9 215.5M574.3 213.7L559.4 239.5M574.3 213.7L586.7 241.6M656.4 217.6L681.9 218.9M656.4 217.6L641.3 244.4M656.4 217.6L668.3 245.9M782.6 223.9L756.6 222.6M782.6 223.9L775.7 251.1M782.6 223.9L802.5 252.4M861.2 223.8L834 226.1M861.2 223.8L855 250.3M861.2 223.8L876.4 236.9M890.6 229.2L891.2 243.1M890.6 229.2L876.4 236.9M171.9 196.3L175.2 222.6M522.7 200.7L520.5 216.4M520.5 216.4L503 214.4M520.5 216.4L505.2 237.4M520.5 216.4L532.8 239.8M559.4 239.5L586.7 241.6M559.4 239.5L532.8 239.8M756.6 222.6L775.7 251.1M756.6 222.6L748.9 249.7M103.5 229.7L103.7 213.8M103.5 229.7L122.9 225.7M103.7 213.8L122.9 225.7M220.7 195.4L223.8 227M220.7 195.4L239.1 208.4M220.7 195.4L199.9 221.7M271.7 212.5L239.1 208.4M271.7 212.5L286.1 232.2M271.7 212.5L254.3 229.8M374.3 204.1L402.4 205.9M374.3 204.1L361.5 231.4M374.3 204.1L386 230.9M402.4 205.9L409.5 236.8M402.4 205.9L386 230.9M402.4 205.9L428 226.4M486.2 216.1L466.9 215.5M486.2 216.1L503 214.4M486.2 216.1L478 238.1M486.2 216.1L505.2 237.4M586.7 241.6L614.1 243M706.4 220.3L695.3 247.5M706.4 220.3L681.9 218.9M706.4 220.3L722.2 248.6M775.7 251.1L748.9 249.7M775.7 251.1L802.5 252.4M834 226.1L829.2 254.4M834 226.1L855 250.3M891.2 243.1L891.5 258M891.2 243.1L876.4 236.9M891.2 243.1L879.9 252.8M223.8 227L239.1 208.4M223.8 227L199.9 221.7M223.8 227L254.3 229.8M239.1 208.4L254.3 229.8M286.1 232.2L254.3 229.8M286.1 232.2L318 234.4M449.7 211.2L450.8 236.3M449.7 211.2L466.9 215.5M449.7 211.2L428 226.4M450.8 236.3L466.9 215.5M450.8 236.3L428 226.4M450.8 236.3L478 238.1M695.3 247.5L681.9 218.9M695.3 247.5L668.3 245.9M695.3 247.5L722.2 248.6M681.9 218.9L668.3 245.9M748.9 249.7L722.2 248.6M829.2 254.4L855 250.3M829.2 254.4L802.5 252.4M891.5 258L879.9 252.8M891.5 258L888.6 270.7M175.2 222.6L199.9 221.7M338.1 226.1L361.5 231.4M338.1 226.1L318 234.4M361.5 231.4L386 230.9M409.5 236.8L386 230.9M409.5 236.8L428 226.4M466.9 215.5L478 238.1M503 214.4L505.2 237.4M641.3 244.4L668.3 245.9M641.3 244.4L614.1 243M855 250.3L876.4 236.9M855 250.3L871.5 266.2M855 250.3L879.9 252.8M876.4 236.9L879.9 252.8M871.5 266.2L879.9 252.8M871.5 266.2L888.6 270.7M421.4 285L446.3 294.1M421.4 285L416.7 310.4M421.4 285L393.5 286.3M478 238.1L505.2 237.4M497.6 292.2L525.6 293.1M497.6 292.2L471.4 288.8M497.6 292.2L472.9 316.5M497.6 292.2L505.1 318.2M505.2 237.4L532.8 239.8M720.3 303L748.3 303.8M720.3 303L693.6 302.5M720.3 303L730.4 329.8M720.3 303L702.6 331.3M879.9 252.8L888.6 270.7M107 261.3L129.9 274.7M107 261.3L104.5 277.6M129.9 274.7L104.5 277.6M129.9 274.7L161.4 273.4M129.9 274.7L145.9 297.7M129.9 274.7L110.2 293.9M191.1 275.8L220.8 277.4M191.1 275.8L161.4 273.4M191.1 275.8L174.5 302M191.1 275.8L204.1 302.5M220.8 277.4L234.8 304.2M220.8 277.4L250.3 278.6M220.8 277.4L204.1 302.5M366.3 285.7L338.2 284.2M366.3 285.7L393.5 286.3M366.3 285.7L387.3 313.3M366.3 285.7L356.9 312M446.3 294.1L416.7 310.4M446.3 294.1L471.4 288.8M446.3 294.1L472.9 316.5M446.3 294.1L441.5 324.4M637.2 297.1L666.6 298.9M637.2 297.1L609.7 297.8M637.2 297.1L623.7 325.5M637.2 297.1L650 322.4M748.3 303.8L730.4 329.8M748.3 303.8L777 305.5M748.3 303.8L760.2 330.4M832.9 308.6L861.1 306.8M832.9 308.6L805.3 307.4M832.9 308.6L849.8 334.2M832.9 308.6L819.9 335.4M861.1 306.8L879.9 301.3M861.1 306.8L875 322.1M861.1 306.8L849.8 334.2M879.9 301.3L891.5 297.5M879.9 301.3L875 322.1M879.9 301.3L890.1 313.5M104.5 277.6L110.2 293.9M161.4 273.4L145.9 297.7M161.4 273.4L174.5 302M234.8 304.2L250.3 278.6M234.8 304.2L264.5 305.2M234.8 304.2L204.1 302.5M234.8 304.2L249.5 331.5M234.8 304.2L218.4 327.9M338.2 284.2L309.5 282M338.2 284.2L325.9 310.1M338.2 284.2L356.9 312M525.6 293.1L554.2 294.9M525.6 293.1L536.1 320.2M525.6 293.1L505.1 318.2M554.2 294.9L582.2 296.8M554.2 294.9L536.1 320.2M554.2 294.9L566.1 323.2M582.2 296.8L595.7 325.3M582.2 296.8L609.7 297.8M582.2 296.8L566.1 323.2M666.6 298.9L693.6 302.5M666.6 298.9L675.5 328.6M666.6 298.9L650 322.4M693.6 302.5L675.5 328.6M693.6 302.5L702.6 331.3M891.5 297.5L890.1 313.5M145.9 297.7L110.2 293.9M145.9 297.7L155.2 326.6M145.9 297.7L125.7 314.5M145.9 297.7L174.5 302M250.3 278.6L279.9 280.4M250.3 278.6L264.5 305.2M279.9 280.4L264.5 305.2M279.9 280.4L309.5 282M279.9 280.4L295.7 306.9M416.7 310.4L393.5 286.3M416.7 310.4L387.3 313.3M416.7 310.4L411.3 337.3M416.7 310.4L441.5 324.4M471.4 288.8L472.9 316.5M536.1 320.2L505.1 318.2M536.1 320.2L566.1 323.2M536.1 320.2L520.2 344.8M536.1 320.2L550.1 347.7M595.7 325.3L609.7 297.8M595.7 325.3L566.1 323.2M595.7 325.3L582.7 350.1M595.7 325.3L623.7 325.5M595.7 325.3L616.4 351.7M609.7 297.8L623.7 325.5M805.3 307.4L777 305.5M805.3 307.4L819.9 335.4M805.3 307.4L790.1 333.2M875 322.1L849.8 334.2M875 322.1L890.1 313.5M875 322.1L875.5 340.5M875 322.1L889.7 328.3M110.2 293.9L125.7 314.5M110.2 293.9L103.2 310.6M155.2 326.6L125.7 314.5M155.2 326.6L174.5 302M155.2 326.6L129.8 343.1M155.2 326.6L187.8 328.6M155.2 326.6L148.8 349.6M155.2 326.6L170.3 348.6M264.5 305.2L249.5 331.5M264.5 305.2L295.7 306.9M264.5 305.2L279.9 330.1M309.5 282L295.7 306.9M309.5 282L325.9 310.1M393.5 286.3L387.3 313.3M472.9 316.5L505.1 318.2M472.9 316.5L441.5 324.4M472.9 316.5L490.5 342.8M472.9 316.5L461.6 344.6M505.1 318.2L490.5 342.8M505.1 318.2L520.2 344.8M566.1 323.2L582.7 350.1M566.1 323.2L550.1 347.7M675.5 328.6L650 322.4M675.5 328.6L702.6 331.3M675.5 328.6L648.6 348.9M675.5 328.6L680.2 355.6M730.4 329.8L702.6 331.3M730.4 329.8L760.2 330.4M730.4 329.8L713.2 357.8M730.4 329.8L742.5 355.1M849.8 334.2L819.9 335.4M849.8 334.2L864.7 357.9M849.8 334.2L875.5 340.5M849.8 334.2L835.2 361.7M890.1 313.5L889.7 328.3M125.7 314.5L103.2 310.6M125.7 314.5L106.4 328.1M125.7 314.5L129.8 343.1M174.5 302L204.1 302.5M174.5 302L187.8 328.6M204.1 302.5L218.4 327.9M204.1 302.5L187.8 328.6M249.5 331.5L218.4 327.9M249.5 331.5L279.9 330.1M249.5 331.5L231.1 351.1M249.5 331.5L250.5 356.4M249.5 331.5L269 353.3M387.3 313.3L356.9 312M387.3 313.3L411.3 337.3M387.3 313.3L377 337.9M582.7 350.1L550.1 347.7M582.7 350.1L564.2 369.6M582.7 350.1L600.8 371.1M582.7 350.1L616.4 351.7M582.7 350.1L582.6 375.3M623.7 325.5L650 322.4M623.7 325.5L648.6 348.9M623.7 325.5L616.4 351.7M650 322.4L648.6 348.9M777 305.5L760.2 330.4M777 305.5L790.1 333.2M819.9 335.4L835.2 361.7M819.9 335.4L790.1 333.2M819.9 335.4L803.9 359.9M864.7 357.9L875.5 340.5M864.7 357.9L835.2 361.7M864.7 357.9L886.9 355.4M864.7 357.9L877.2 371.6M864.7 357.9L854.2 384.1M875.5 340.5L889.7 328.3M875.5 340.5L890.9 342.2M875.5 340.5L886.9 355.4M889.7 328.3L890.9 342.2M103.2 310.6L106.4 328.1M835.2 361.7L803.9 359.9M835.2 361.7L818.7 383.1M835.2 361.7L836.6 388.9M835.2 361.7L854.2 384.1M890.9 342.2L886.9 355.4M106.4 328.1L129.8 343.1M106.4 328.1L107.4 345.6M218.4 327.9L187.8 328.6M218.4 327.9L231.1 351.1M218.4 327.9L209.4 350.9M295.7 306.9L325.9 310.1M295.7 306.9L279.9 330.1M295.7 306.9L310.4 334.6M325.9 310.1L356.9 312M325.9 310.1L343.2 336M325.9 310.1L310.4 334.6M356.9 312L377 337.9M356.9 312L343.2 336M411.3 337.3L441.5 324.4M411.3 337.3L377 337.9M411.3 337.3L417.2 363.9M411.3 337.3L436.6 356.7M411.3 337.3L396.8 358.7M441.5 324.4L461.6 344.6M441.5 324.4L436.6 356.7M490.5 342.8L520.2 344.8M490.5 342.8L461.6 344.6M490.5 342.8L479.9 366.1M490.5 342.8L503.5 367.1M520.2 344.8L550.1 347.7M520.2 344.8L525.6 368.3M520.2 344.8L503.5 367.1M702.6 331.3L680.2 355.6M702.6 331.3L713.2 357.8M129.8 343.1L107.4 345.6M129.8 343.1L148.8 349.6M129.8 343.1L119.2 360.7M129.8 343.1L133 361.5M279.9 330.1L269 353.3M279.9 330.1L289.9 354.3M279.9 330.1L310.4 334.6M648.6 348.9L680.2 355.6M648.6 348.9L616.4 351.7M648.6 348.9L637.8 372.9M648.6 348.9L658.7 374.3M760.2 330.4L790.1 333.2M760.2 330.4L772.4 357.1M760.2 330.4L742.5 355.1M790.1 333.2L803.9 359.9M790.1 333.2L772.4 357.1M803.9 359.9L772.4 357.1M803.9 359.9L784.6 379.1M803.9 359.9L818.7 383.1M803.9 359.9L800.9 387.3M886.9 355.4L891.2 368M886.9 355.4L877.2 371.6M107.4 345.6L104.7 361.4M107.4 345.6L119.2 360.7M187.8 328.6L170.3 348.6M187.8 328.6L209.4 350.9M187.8 328.6L190.4 351.7M231.1 351.1L250.5 356.4M231.1 351.1L209.4 350.9M231.1 351.1L223.9 367M231.1 351.1L238.2 368.6M250.5 356.4L252.2 371.2M250.5 356.4L269 353.3M250.5 356.4L238.2 368.6M250.5 356.4L265.4 370M377 337.9L343.2 336M377 337.9L360.2 357.4M377 337.9L378.5 363.7M377 337.9L396.8 358.7M461.6 344.6L436.6 356.7M461.6 344.6L457.7 367.1M461.6 344.6L479.9 366.1M550.1 347.7L525.6 368.3M550.1 347.7L544 371.8M550.1 347.7L564.2 369.6M680.2 355.6L713.2 357.8M680.2 355.6L658.7 374.3M680.2 355.6L695.5 376.8M680.2 355.6L676.3 380.4M713.2 357.8L695.5 376.8M713.2 357.8L742.5 355.1M713.2 357.8L714.5 382.2M713.2 357.8L733.6 379.9M772.4 357.1L784.6 379.1M772.4 357.1L742.5 355.1M772.4 357.1L755 378.8M772.4 357.1L770.3 387.4M891.2 368L877.2 371.6M891.2 368L889.9 381.5M148.8 349.6L170.3 348.6M148.8 349.6L133 361.5M148.8 349.6L145.4 364.8M148.8 349.6L159 363.5M170.3 348.6L190.4 351.7M170.3 348.6L171.7 365.7M170.3 348.6L159 363.5M170.3 348.6L183.9 365.4M209.4 350.9L190.4 351.7M209.4 350.9L198.3 366.9M209.4 350.9L211.2 367.4M209.4 350.9L223.9 367M343.2 336L310.4 334.6M343.2 336L326.3 356M343.2 336L343.3 362.3M343.2 336L360.2 357.4M417.2 363.9L436.6 356.7M417.2 363.9L396.8 358.7M417.2 363.9L404.2 377.3M417.2 363.9L430.1 378M417.2 363.9L417 380.2M436.6 356.7L457.7 367.1M436.6 356.7L430.1 378M436.6 356.7L443 378.1M525.6 368.3L544 371.8M525.6 368.3L531.1 385.9M525.6 368.3L503.5 367.1M525.6 368.3L517.2 383.4M544 371.8L564.2 369.6M544 371.8L531.1 385.9M544 371.8L543.9 387.4M544 371.8L556.9 386.6M564.2 369.6L582.6 375.3M564.2 369.6L556.9 386.6M564.2 369.6L570.2 387.7M784.6 379.1L800.9 387.3M784.6 379.1L770.3 387.4M784.6 379.1L786.3 398.9M818.7 383.1L800.9 387.3M818.7 383.1L836.6 388.9M818.7 383.1L824.4 401.9M818.7 383.1L811.9 401.6M104.7 361.4L119.2 360.7M190.4 351.7L198.3 366.9M190.4 351.7L183.9 365.4M252.2 371.2L238.2 368.6M252.2 371.2L265.4 370M269 353.3L289.9 354.3M269 353.3L279.6 370.5M269 353.3L265.4 370M289.9 354.3L279.6 370.5M289.9 354.3L293.8 371.7M289.9 354.3L307.8 359.8M289.9 354.3L310.4 334.6M457.7 367.1L468.4 381.4M457.7 367.1L479.9 366.1M457.7 367.1L443 378.1M457.7 367.1L455.4 382.7M531.1 385.9L543.9 387.4M531.1 385.9L517.2 383.4M543.9 387.4L556.9 386.6M600.8 371.1L616.4 351.7M600.8 371.1L582.6 375.3M600.8 371.1L620.1 377.2M600.8 371.1L595.9 389M600.8 371.1L608.7 389.5M616.4 351.7L637.8 372.9M616.4 351.7L620.1 377.2M637.8 372.9L658.7 374.3M637.8 372.9L620.1 377.2M637.8 372.9L648.2 391.2M637.8 372.9L634.6 390.9M658.7 374.3L648.2 391.2M658.7 374.3L676.3 380.4M658.7 374.3L661.8 392.6M695.5 376.8L676.3 380.4M695.5 376.8L687.6 394.2M695.5 376.8L700.3 394.7M695.5 376.8L714.5 382.2M742.5 355.1L755 378.8M742.5 355.1L733.6 379.9M755 378.8L733.6 379.9M755 378.8L748.3 395.9M755 378.8L770.3 387.4M755 378.8L760.3 399.3M800.9 387.3L799 402.6M800.9 387.3L786.3 398.9M800.9 387.3L811.9 401.6M836.6 388.9L824.4 401.9M836.6 388.9L854.2 384.1M836.6 388.9L837 404.9M836.6 388.9L849.6 403.1M877.2 371.6L889.9 381.5M877.2 371.6L854.2 384.1M877.2 371.6L873.2 390.2M889.9 381.5L873.2 390.2M889.9 381.5L889.5 394M171.7 365.7L159 363.5M171.7 365.7L183.9 365.4M198.3 366.9L211.2 367.4M198.3 366.9L183.9 365.4M211.2 367.4L223.9 367M279.6 370.5L293.8 371.7M279.6 370.5L265.4 370M293.8 371.7L307.8 359.8M293.8 371.7L307.3 374.4M307.8 359.8L310.4 334.6M307.8 359.8L326.3 356M307.8 359.8L307.3 374.4M307.8 359.8L321.2 373.1M310.4 334.6L326.3 356M326.3 356L343.3 362.3M326.3 356L321.2 373.1M326.3 356L335 375M343.3 362.3L360.2 357.4M343.3 362.3L335 375M343.3 362.3L350.9 375.9M360.2 357.4L378.5 363.7M360.2 357.4L350.9 375.9M360.2 357.4L364.4 375.3M378.5 363.7L396.8 358.7M378.5 363.7L364.4 375.3M378.5 363.7L377.8 378.6M378.5 363.7L391.1 377M396.8 358.7L404.2 377.3M396.8 358.7L391.1 377M404.2 377.3L391.1 377M404.2 377.3L417 380.2M430.1 378L417 380.2M430.1 378L443 378.1M468.4 381.4L479.9 366.1M468.4 381.4L455.4 382.7M468.4 381.4L480.5 383.5M479.9 366.1L503.5 367.1M479.9 366.1L480.5 383.5M479.9 366.1L492.6 381.6M503.5 367.1L492.6 381.6M503.5 367.1L504.9 385.1M503.5 367.1L517.2 383.4M582.6 375.3L570.2 387.7M582.6 375.3L583.5 390.4M582.6 375.3L595.9 389M620.1 377.2L608.7 389.5M620.1 377.2L621.8 392.5M620.1 377.2L634.6 390.9M648.2 391.2L634.6 390.9M648.2 391.2L661.8 392.6M676.3 380.4L687.6 394.2M676.3 380.4L661.8 392.6M676.3 380.4L674.6 395.6M687.6 394.2L700.3 394.7M687.6 394.2L674.6 395.6M700.3 394.7L714.5 382.2M700.3 394.7L712.1 397.7M714.5 382.2L733.6 379.9M714.5 382.2L712.1 397.7M714.5 382.2L725 396.3M733.6 379.9L748.3 395.9M733.6 379.9L725 396.3M733.6 379.9L737.1 398.3M748.3 395.9L737.1 398.3M748.3 395.9L760.3 399.3M770.3 387.4L760.3 399.3M770.3 387.4L774.1 401.7M770.3 387.4L786.3 398.9M799 402.6L786.3 398.9M799 402.6L811.9 401.6M824.4 401.9L811.9 401.6M824.4 401.9L837 404.9M854.2 384.1L862.1 403.9M854.2 384.1L873.2 390.2M854.2 384.1L849.6 403.1M862.1 403.9L873.2 390.2M862.1 403.9L849.6 403.1M862.1 403.9L875.4 406.5M873.2 390.2L889.5 394M873.2 390.2L875.4 406.5M889.5 394L875.4 406.5M889.5 394L888.5 406.4M119.2 360.7L133 361.5M133 361.5L145.4 364.8M145.4 364.8L159 363.5M223.9 367L238.2 368.6M307.3 374.4L321.2 373.1M321.2 373.1L335 375M335 375L350.9 375.9M350.9 375.9L364.4 375.3M364.4 375.3L377.8 378.6M377.8 378.6L391.1 377M443 378.1L455.4 382.7M480.5 383.5L492.6 381.6M492.6 381.6L504.9 385.1M504.9 385.1L517.2 383.4M556.9 386.6L570.2 387.7M570.2 387.7L583.5 390.4M583.5 390.4L595.9 389M595.9 389L608.7 389.5M608.7 389.5L621.8 392.5M621.8 392.5L634.6 390.9M661.8 392.6L674.6 395.6M712.1 397.7L725 396.3M725 396.3L737.1 398.3M760.3 399.3L774.1 401.7M774.1 401.7L786.3 398.9M837 404.9L849.6 403.1M875.4 406.5L888.5 406.4" stroke="#918d86" stroke-width="0.65" fill="none"/>
<rect x="88.5" y="164" width="2.5" height="207" fill="#fff"/>
<path d="M88.9 164v207" stroke="#7a96ea" stroke-width="1.3"/>
<polygon points="900,202 907,199.5 907,417 900,418" fill="#fff"/>
<path d="M900.8 202v216" stroke="#34321c" stroke-width="2.6"/>
<path d="M902.5 201v217" stroke="#4a6ae0" stroke-width="1"/>
<path d="M906.5 199.5v217.5" stroke="#8aa2f0" stroke-width="1"/>
<path d="M900 202L907 199.5" stroke="#7a90e0" stroke-width="1"/>
<path d="M902.5 284.5h4" stroke="#4a6ae0" stroke-width="1"/>
<polygon points="89,163.5 97,161.8 907,198.6 900,202 91,165.5" fill="#cfe3ea"/>
<path d="M91 165.3L900 201.8" stroke="#8c92a8" stroke-width="0.9"/>
<path d="M96 162.5L906 199.1" stroke="#96a0c8" stroke-width="0.8"/>
<path d="M91 244.001L900 284.512" stroke="#8a90c0" stroke-width="0.8"/>
<path d="M91 165.5h0M105.9 166.2h0M128.7 167.2h0M156.8 168.5h0M184.8 169.7h0M212.9 171h0M240.9 172.3h0M269 173.5h0M297.1 174.8h0M325.1 176.1h0M353.2 177.3h0M381.2 178.6h0M409.3 179.9h0M434.9 181h0M451.8 181.8h0M463.3 182.3h0M474.3 182.8h0M485.4 183.3h0M496.4 183.8h0M507.4 184.3h0M520.1 184.9h0M539.7 185.7h0M567.2 187h0M595.3 188.3h0M623.3 189.5h0M651.4 190.8h0M679.4 192h0M707.5 193.3h0M735.6 194.6h0M763.6 195.8h0M791.7 197.1h0M819.7 198.4h0M847.8 199.6h0M872.3 200.8h0M888.9 201.5h0M900 202h0M91 371h0M100 371.5h0M109 372h0M118 372.6h0M127 373.1h0M135.9 373.6h0M144.9 374.1h0M153.9 374.7h0M162.9 375.2h0M171.9 375.7h0M180.9 376.2h0M189.9 376.7h0M198.9 377.3h0M207.9 377.8h0M216.8 378.3h0M225.8 378.8h0M234.8 379.4h0M243.8 379.9h0M252.8 380.4h0M261.8 380.9h0M270.8 381.4h0M279.8 382h0M288.8 382.5h0M297.7 383h0M306.7 383.5h0M315.7 384.1h0M324.7 384.6h0M333.7 385.1h0M342.7 385.6h0M351.7 386.1h0M360.7 386.7h0M369.7 387.2h0M378.6 387.7h0M387.6 388.2h0M396.6 388.8h0M405.6 389.3h0M414.6 389.8h0M423.6 390.3h0M432.6 390.8h0M441.6 391.4h0M450.6 391.9h0M459.5 392.4h0M468.5 392.9h0M477.5 393.5h0M486.5 394h0M495.5 394.5h0M504.5 395h0M513.5 395.5h0M522.5 396.1h0M531.5 396.6h0M540.4 397.1h0M549.4 397.6h0M558.4 398.2h0M567.4 398.7h0M576.4 399.2h0M585.4 399.7h0M594.4 400.2h0M603.4 400.8h0M612.4 401.3h0M621.3 401.8h0M630.3 402.3h0M639.3 402.9h0M648.3 403.4h0M657.3 403.9h0M666.3 404.4h0M675.3 404.9h0M684.3 405.5h0M693.3 406h0M702.2 406.5h0M711.2 407h0M720.2 407.6h0M729.2 408.1h0M738.2 408.6h0M747.2 409.1h0M756.2 409.6h0M765.2 410.2h0M774.2 410.7h0M783.1 411.2h0M792.1 411.7h0M801.1 412.3h0M810.1 412.8h0M819.1 413.3h0M828.1 413.8h0M837.1 414.3h0M846.1 414.9h0M855.1 415.4h0M864 415.9h0M873 416.4h0M882 417h0M891 417.5h0M900 418h0M91 177.7h0M91 189.8h0M91 202h0M91 214.1h0M91 226.3h0M91 238.4h0M91 250.6h0M91 262.7h0M91 274.9h0M91 287h0M91 299.2h0M91 311.3h0M91 323.5h0M91 335.7h0M91 347.8h0M91 360h0M900 211.4h0M900 220.8h0M900 230.2h0M900 239.6h0M900 249h0M900 258.3h0M900 267.7h0M900 277.1h0M900 286.5h0M900 295.9h0M900 305.3h0M900 314.7h0M900 324.1h0M900 333.5h0M900 342.9h0M900 352.3h0M900 361.7h0M900 371h0M900 380.4h0M900 389.8h0M900 399.2h0M900 408.6h0M91 244h0M105.7 244.7h0M128.1 245.9h0M155.8 247.2h0M183.5 248.6h0M211.2 250h0M238.9 251.4h0M266.7 252.8h0M294.4 254.2h0M322.1 255.6h0M349.8 257h0M377.5 258.3h0M405.3 259.7h0M433 261.1h0M460.7 262.5h0M488.4 263.9h0M516.1 265.3h0M543.9 266.7h0M571.6 268.1h0M599.3 269.5h0M627 270.8h0M654.7 272.2h0M682.5 273.6h0M710.2 275h0M737.9 276.4h0M765.6 277.8h0M793.3 279.2h0M821.1 280.6h0M848.8 281.9h0M872.8 283.2h0M889.1 284h0M900 284.5h0M101.1 180.8h0M117.9 185h0M148.1 192.7h0M196.1 196.3h0M320.7 199.6h0M431.9 201.8h0M449.9 195.9h0M471.5 193h0M484.2 193.1h0M497.7 193.6h0M509.4 193.6h0M545.1 211.5h0M629.8 216.5h0M125.4 204.5h0M150.4 221.2h0M288.5 195.9h0M462.5 200.6h0M460 191.1h0M492.1 201.4h0M507.4 202.1h0M602.5 215.2h0M731 221h0M808.6 225.6h0M879.9 217.5h0M891.6 214.4h0M103.3 198.4h0M255.5 193.6h0M304.5 215.7h0M348 201.6h0M477.4 201.9h0M574.3 213.7h0M656.4 217.6h0M782.6 223.9h0M861.2 223.8h0M890.6 229.2h0M171.9 196.3h0M522.7 200.7h0M520.5 216.4h0M559.4 239.5h0M756.6 222.6h0M103.5 229.7h0M103.7 213.8h0M220.7 195.4h0M271.7 212.5h0M374.3 204.1h0M402.4 205.9h0M486.2 216.1h0M586.7 241.6h0M706.4 220.3h0M775.7 251.1h0M834 226.1h0M891.2 243.1h0M223.8 227h0M239.1 208.4h0M286.1 232.2h0M449.7 211.2h0M450.8 236.3h0M695.3 247.5h0M681.9 218.9h0M748.9 249.7h0M829.2 254.4h0M891.5 258h0M175.2 222.6h0M199.9 221.7h0M254.3 229.8h0M338.1 226.1h0M361.5 231.4h0M409.5 236.8h0M466.9 215.5h0M503 214.4h0M641.3 244.4h0M668.3 245.9h0M722.2 248.6h0M855 250.3h0M876.4 236.9h0M871.5 266.2h0M122.9 225.7h0M318 234.4h0M386 230.9h0M428 226.4h0M421.4 285h0M478 238.1h0M497.6 292.2h0M505.2 237.4h0M720.3 303h0M802.5 252.4h0M879.9 252.8h0M888.6 270.7h0M107 261.3h0M129.9 274.7h0M191.1 275.8h0M220.8 277.4h0M366.3 285.7h0M446.3 294.1h0M532.8 239.8h0M614.1 243h0M637.2 297.1h0M748.3 303.8h0M832.9 308.6h0M861.1 306.8h0M879.9 301.3h0M104.5 277.6h0M161.4 273.4h0M234.8 304.2h0M338.2 284.2h0M525.6 293.1h0M554.2 294.9h0M582.2 296.8h0M666.6 298.9h0M693.6 302.5h0M891.5 297.5h0M145.9 297.7h0M250.3 278.6h0M279.9 280.4h0M416.7 310.4h0M471.4 288.8h0M536.1 320.2h0M595.7 325.3h0M609.7 297.8h0M805.3 307.4h0M875 322.1h0M110.2 293.9h0M155.2 326.6h0M264.5 305.2h0M309.5 282h0M393.5 286.3h0M472.9 316.5h0M505.1 318.2h0M566.1 323.2h0M675.5 328.6h0M730.4 329.8h0M849.8 334.2h0M890.1 313.5h0M125.7 314.5h0M174.5 302h0M204.1 302.5h0M249.5 331.5h0M387.3 313.3h0M582.7 350.1h0M623.7 325.5h0M650 322.4h0M777 305.5h0M819.9 335.4h0M864.7 357.9h0M875.5 340.5h0M889.7 328.3h0M103.2 310.6h0M835.2 361.7h0M890.9 342.2h0M106.4 328.1h0M218.4 327.9h0M295.7 306.9h0M325.9 310.1h0M356.9 312h0M411.3 337.3h0M441.5 324.4h0M490.5 342.8h0M520.2 344.8h0M702.6 331.3h0M129.8 343.1h0M279.9 330.1h0M648.6 348.9h0M760.2 330.4h0M790.1 333.2h0M803.9 359.9h0M886.9 355.4h0M107.4 345.6h0M187.8 328.6h0M231.1 351.1h0M250.5 356.4h0M377 337.9h0M461.6 344.6h0M550.1 347.7h0M680.2 355.6h0M713.2 357.8h0M772.4 357.1h0M891.2 368h0M148.8 349.6h0M170.3 348.6h0M209.4 350.9h0M343.2 336h0M417.2 363.9h0M436.6 356.7h0M525.6 368.3h0M544 371.8h0M564.2 369.6h0M784.6 379.1h0M818.7 383.1h0M104.7 361.4h0M190.4 351.7h0M252.2 371.2h0M269 353.3h0M289.9 354.3h0M457.7 367.1h0M531.1 385.9h0M543.9 387.4h0M600.8 371.1h0M616.4 351.7h0M637.8 372.9h0M658.7 374.3h0M695.5 376.8h0M742.5 355.1h0M755 378.8h0M800.9 387.3h0M836.6 388.9h0M877.2 371.6h0M889.9 381.5h0M171.7 365.7h0M198.3 366.9h0M211.2 367.4h0M279.6 370.5h0M293.8 371.7h0M307.8 359.8h0M310.4 334.6h0M326.3 356h0M343.3 362.3h0M360.2 357.4h0M378.5 363.7h0M396.8 358.7h0M404.2 377.3h0M430.1 378h0M468.4 381.4h0M479.9 366.1h0M503.5 367.1h0M582.6 375.3h0M620.1 377.2h0M648.2 391.2h0M676.3 380.4h0M687.6 394.2h0M700.3 394.7h0M714.5 382.2h0M733.6 379.9h0M748.3 395.9h0M770.3 387.4h0M799 402.6h0M824.4 401.9h0M854.2 384.1h0M862.1 403.9h0M873.2 390.2h0M889.5 394h0M119.2 360.7h0M133 361.5h0M145.4 364.8h0M159 363.5h0M183.9 365.4h0M223.9 367h0M238.2 368.6h0M265.4 370h0M307.3 374.4h0M321.2 373.1h0M335 375h0M350.9 375.9h0M364.4 375.3h0M377.8 378.6h0M391.1 377h0M417 380.2h0M443 378.1h0M455.4 382.7h0M480.5 383.5h0M492.6 381.6h0M504.9 385.1h0M517.2 383.4h0M556.9 386.6h0M570.2 387.7h0M583.5 390.4h0M595.9 389h0M608.7 389.5h0M621.8 392.5h0M634.6 390.9h0M661.8 392.6h0M674.6 395.6h0M712.1 397.7h0M725 396.3h0M737.1 398.3h0M760.3 399.3h0M774.1 401.7h0M786.3 398.9h0M811.9 401.6h0M837 404.9h0M849.6 403.1h0M875.4 406.5h0M888.5 406.4h0M98.5 165.8h0M91 171.6h0M95.4 173.6h0M117.3 166.7h0M103 173.3h0M113.2 174.8h0M142.7 167.8h0M122.4 175.5h0M139.2 179.4h0M170.8 169.1h0M153.7 181.1h0M163.3 183h0M198.9 170.4h0M189 183.6h0M179.5 183.6h0M226.9 171.6h0M203.4 182.9h0M217.7 182.9h0M255 172.9h0M247.5 183.5h0M230.1 183.1h0M283 174.2h0M277.9 185.5h0M261.5 183.1h0M311.1 175.4h0M307.8 188.2h0M292 185.1h0M339.1 176.7h0M324.1 188h0M337.7 187.8h0M367.2 178h0M349.8 189.3h0M365 189.7h0M395.3 179.2h0M377 191.1h0M391.1 192.8h0M422.1 180.4h0M419.9 191.6h0M405 192.7h0M443.4 181.4h0M434.8 191.6h0M443.2 187.7h0M457.6 182h0M451.4 188.9h0M455.4 186.9h0M468.8 182.5h0M466.8 188.2h0M462 186.8h0M479.9 183h0M473.4 188h0M478.7 188.5h0M490.9 183.5h0M484.3 188.2h0M501.9 184h0M490.9 189.3h0M496.6 188.8h0M513.7 184.6h0M503.1 189.6h0M508.1 189h0M529.9 185.3h0M514.2 188.5h0M522.4 192.6h0M553.5 186.4h0M541.1 198.9h0M530.2 192.1h0M581.2 187.6h0M555.5 198.6h0M569.7 200.6h0M609.3 188.9h0M597.5 202.1h0M584 200.3h0M637.4 190.2h0M625.7 203.2h0M612.1 201.7h0M665.4 191.4h0M641.8 204.6h0M654.8 204h0M693.5 192.7h0M667 203.9h0M681.6 205.4h0M721.5 193.9h0M720.2 206.4h0M708 206.8h0M693.8 205.2h0M749.6 195.2h0M734.3 208h0M744.9 209.5h0M777.6 196.5h0M774.1 209.2h0M761.6 209.6h0M805.7 197.7h0M799.4 211.8h0M785.8 210.1h0M833.8 199h0M813.4 211.7h0M828.2 211.6h0M860.1 200.2h0M853.3 212.4h0M839.6 212.2h0M880.6 201.1h0M876.9 208.8h0M867.9 212.8h0M894.5 201.7h0M894.5 206.4h0M885.3 210h0M890.9 207.8h0M900 206.7h0M95.5 371.3h0M91 365.5h0M104.5 371.8h0M95.5 365.7h0M103 366.8h0M113.5 372.3h0M106.3 367h0M114.6 366.8h0M122.5 372.8h0M119.3 366.7h0M131.4 373.3h0M123.6 366.5h0M130.6 367.6h0M140.4 373.9h0M133.9 367.7h0M140.1 368.6h0M149.4 374.4h0M145.7 369.5h0M158.4 374.9h0M149.1 370.2h0M156.1 368.9h0M167.4 375.4h0M167.9 370.9h0M161.6 369.1h0M176.4 376h0M172.5 370.7h0M185.4 376.5h0M176.9 370.4h0M181.9 370.7h0M194.4 377h0M193.7 371.5h0M187.5 370.8h0M203.4 377.5h0M198.2 372.1h0M212.3 378h0M202.7 372.7h0M209.9 372.7h0M221.3 378.6h0M213.3 373.3h0M219.6 372.1h0M230.3 379.1h0M225.5 372.8h0M239.3 379.6h0M230 372.6h0M237 374.1h0M248.3 380.1h0M247.5 375h0M241.5 373.9h0M257.3 380.7h0M252.1 375.8h0M266.3 381.2h0M256.5 376.5h0M263.2 375.3h0M275.3 381.7h0M274.7 375.5h0M268.7 375.4h0M284.3 382.2h0M280.3 376.2h0M293.2 382.7h0M283.6 376.9h0M292 377.4h0M302.2 383.3h0M296.4 377.1h0M302.9 379.1h0M311.2 383.8h0M307.5 379h0M320.2 384.3h0M312 378.8h0M318.9 378.8h0M329.2 384.8h0M323.7 378.6h0M329.3 379.2h0M338.2 385.4h0M333.9 380h0M347.2 385.9h0M338.2 380.7h0M346.3 380.4h0M356.2 386.4h0M350.9 381.1h0M365.2 386.9h0M355 382h0M363.1 381.2h0M374.1 387.4h0M366.5 381.5h0M374.1 383.2h0M383.1 388h0M377.7 383.2h0M392.1 388.5h0M383.4 382.7h0M388.7 382.4h0M401.1 389h0M401 383.4h0M394.4 382.6h0M410.1 389.5h0M404.4 383.4h0M410.9 384.2h0M419.1 390.1h0M416.3 385.1h0M428.1 390.6h0M426.4 383.9h0M419.8 385.6h0M437.1 391.1h0M432 384.3h0M438.3 384.9h0M446.1 391.6h0M442.9 384.8h0M455 392.1h0M447.5 384.7h0M452.6 387.1h0M464 392.7h0M464.5 387.3h0M458 387.3h0M473 393.2h0M467.9 387.2h0M482 393.7h0M473.6 386.9h0M478.4 388.3h0M491 394.2h0M484 388.4h0M490.2 388.1h0M500 394.8h0M493.2 388.2h0M500.9 390.4h0M509 395.3h0M505.1 390.1h0M518 395.8h0M508.7 390.7h0M515.9 389.7h0M527 396.3h0M526.4 390.6h0M520.6 389.4h0M535.9 396.8h0M530.6 391.2h0M544.9 397.4h0M536.3 391.1h0M541.7 392.1h0M553.9 397.9h0M547 392.3h0M552.5 391.6h0M562.9 398.4h0M557.2 392.4h0M571.9 398.9h0M561.6 393.1h0M569.2 393.3h0M580.9 399.5h0M573.8 393.2h0M579.3 394.3h0M589.9 400h0M583.9 395.2h0M598.9 400.5h0M589.4 394.8h0M595.9 394.7h0M607.9 401h0M600.1 394.6h0M605.3 394.8h0M616.8 401.5h0M611.2 395.2h0M617.4 397.3h0M625.8 402.1h0M621.1 397.2h0M634.8 402.6h0M625.6 397.8h0M631.9 396.4h0M643.8 403.1h0M643 396.4h0M637.6 396.7h0M652.8 403.6h0M647.6 397.3h0M661.8 404.2h0M652.1 398h0M658.9 398h0M670.8 404.7h0M664.5 398.3h0M670.9 400.5h0M679.8 405.2h0M674.4 400.3h0M688.8 405.7h0M686.5 400h0M679 401h0M697.7 406.2h0M691.1 399.8h0M697.4 400.7h0M706.7 406.8h0M701.9 400.5h0M707.6 402.6h0M715.7 407.3h0M711 402.3h0M724.7 407.8h0M715.6 403.1h0M722.1 401.8h0M733.7 408.3h0M727.7 402h0M733.7 403.7h0M742.7 408.9h0M738.2 403.4h0M751.7 409.4h0M747 402.4h0M741.4 404.4h0M760.7 409.9h0M751.3 403.3h0M758.9 404.8h0M769.7 410.4h0M763.2 404.6h0M769.2 405.5h0M778.6 410.9h0M773.8 406.2h0M787.6 411.5h0M778.1 407h0M784.1 404.9h0M796.6 412h0M796 407.5h0M788.7 405.6h0M805.6 412.5h0M799.6 407.5h0M814.6 413h0M805 407.2h0M811.5 407.3h0M823.6 413.6h0M822.1 407.8h0M816.2 407h0M832.6 414.1h0M825.4 408.1h0M832.9 409.7h0M841.6 414.6h0M837.5 409.6h0M850.6 415.1h0M842 409.5h0M847.4 408.8h0M859.5 415.6h0M859.4 410.1h0M853 408.9h0M868.5 416.2h0M863.7 409.8h0M870.2 411.8h0M877.5 416.7h0M873.6 411.3h0M886.5 417.2h0M879.1 411.5h0M885.8 412.1h0M895.5 417.7h0M895.5 413h0M889 412.1h0M900 413.3h0M91 183.7h0M95.8 179.9h0M91 195.9h0M95.5 184.7h0M96.7 194.8h0M91 208h0M97 199.7h0M98 207.2h0M91 220.2h0M97.3 214.5h0M91 232.3h0M97.4 227.3h0M98 220.7h0M91 241.2h0M98.1 242.2h0M97.6 234.5h0M91 256.7h0M91 247.3h0M98.8 248.7h0M99.5 255.2h0M91 268.8h0M99.1 263.1h0M98.4 269.6h0M91 281h0M97.9 275.3h0M91 293.1h0M97.1 281.4h0M100.2 291.5h0M91 305.3h0M100.3 295.6h0M96.5 305.5h0M91 317.4h0M97.1 310.4h0M91 329.6h0M98 317.9h0M98.4 326.8h0M91 341.7h0M99.2 332.8h0M98.8 341.3h0M91 353.9h0M99.3 347.4h0M97 355.5h0M97.8 361.2h0M900 216.1h0M895.9 213.2h0M900 225.5h0M896.1 217.2h0M895.8 225.6h0M900 234.9h0M895.2 230.2h0M900 244.3h0M895.7 234h0M895.4 240.9h0M900 253.7h0M895.8 245.6h0M896.2 253.8h0M900 263h0M895.8 258.6h0M900 272.4h0M895.3 263.2h0M894.2 268.6h0M895 281.3h0M900 280.8h0M894.6 273.5h0M900 291.2h0M894.4 285.8h0M900 285.5h0M895.2 291.6h0M900 300.6h0M895.6 296.2h0M900 310h0M896.1 301h0M895.5 310h0M900 319.4h0M895 314.7h0M900 328.8h0M895.5 318.4h0M894.6 325.6h0M900 338.2h0M894.7 331.3h0M896 338.4h0M900 347.6h0M895.4 342.9h0M900 357h0M896 346.7h0M893.6 354.7h0M900 366.3h0M893.7 358h0M895.8 365.2h0M900 375.7h0M895.7 369h0M895.5 376.8h0M900 385.1h0M895 381.6h0M900 394.5h0M894.6 386h0M894.5 391.3h0M900 403.9h0M894.4 397.3h0M894.7 403.6h0M894.3 407h0M98.4 243.5h0M116.8 246.8h0M103.9 237.3h0M115.3 236.2h0M105.7 253.1h0M142 245.5h0M139.9 234.1h0M126.5 235.5h0M118.3 254.6h0M127.5 260.4h0M169.7 246.9h0M152.3 234.4h0M166.3 235.6h0M143.7 261.8h0M159.7 260.1h0M197.3 250.8h0M178.1 236h0M190.7 234.6h0M185.9 262.6h0M173.5 262h0M225 252.2h0M216.5 238h0M206.5 235.5h0M200 262.1h0M214.7 264.2h0M252.8 251h0M230.1 240h0M247.8 241.5h0M230.9 265.1h0M245.6 264.6h0M280.6 252.6h0M275.3 241.5h0M261.2 240.9h0M259.7 266.5h0M274.2 266.2h0M308.2 256.3h0M291.4 242.7h0M305.2 243.1h0M288.4 268h0M302.9 267.6h0M335.9 257.5h0M330.9 241.2h0M319.2 245.2h0M329.3 270.3h0M316.7 269.2h0M363.6 258.9h0M345.2 241.1h0M354.9 243.8h0M357.1 271.9h0M343 270.1h0M391.4 258.2h0M370.3 244.4h0M380.7 244.3h0M371 271.6h0M384.3 273h0M419.2 259.4h0M406.2 248h0M396.6 244.7h0M414.4 271.7h0M398.6 272.7h0M446.8 263.3h0M442.9 249.4h0M421.9 248.4h0M429.5 243.9h0M426.1 272.5h0M441.1 277h0M474.5 264.5h0M456.7 249h0M470.4 251.1h0M454.6 278.8h0M464.8 276.1h0M502.2 265.7h0M484.4 250.5h0M494.1 277.7h0M495.8 250h0M478.9 275.6h0M530.1 264.6h0M506 278.2h0M509.9 251.6h0M523.8 252.1h0M520 279.5h0M557.7 268.5h0M550.9 252.7h0M539.3 252.9h0M533.7 279.1h0M550.2 280.4h0M585.5 267.7h0M564.4 254.3h0M578.1 254.2h0M561.7 280.7h0M575.9 282.8h0M613.2 269.1h0M592.1 256h0M607.7 256.8h0M589.9 282.6h0M603.3 284.1h0M640.9 270.6h0M633 257h0M621.7 256.4h0M633.1 283.6h0M619.7 285.2h0M668.7 271.6h0M647 258.8h0M660.5 258.5h0M645.2 284.2h0M659.9 285.9h0M696.2 275.8h0M689.9 261h0M676.5 259.2h0M675.9 287.1h0M687.2 288.4h0M724.1 274.6h0M701.5 261.9h0M717.3 262.3h0M714.5 289.3h0M700.9 288.2h0M751.7 278h0M744.5 263.5h0M731 262h0M730.1 290.4h0M744 289.8h0M779.6 276.9h0M769.6 264h0M758.3 263.1h0M758.2 291.7h0M770.1 292.1h0M807.1 281.4h0M783.4 265.8h0M799 266.2h0M798 293.8h0M786.3 293h0M834.9 282.3h0M826.6 267.9h0M810.5 267.4h0M828.5 294h0M812.3 293.5h0M860.9 281h0M840.1 267.4h0M852.8 266.3h0M859.6 273.3h0M842.2 296.1h0M853.9 294.9h0M880.9 284.6h0M871.4 274.7h0M881.6 278h0M866 294.5h0M877 292h0M894.6 283.6h0M888.4 277.3h0M885.2 293h0M889.4 290.9h0M109.3 183.6h0M103 189.5h0M133.3 187.5h0M120.5 195.2h0M109.8 190.8h0M136.2 197.5h0M148.3 207h0M160.2 193.1h0M184 195h0M208.4 195h0M184.9 208.9h0M199.1 208.8h0M304.7 196.7h0M311.7 206.7h0M334.3 201.7h0M330.4 212.2h0M318.4 216.9h0M441.2 199.9h0M417.4 205.3h0M440.5 207.2h0M428.9 213.9h0M456.5 197.5h0M454.6 192.9h0M450.5 203.6h0M477.9 192.6h0M466.7 196.3h0M465.6 192.8h0M475 197.1h0M491 192.8h0M488.7 196.8h0M481.2 197.8h0M503.5 192.8h0M495.3 197.8h0M502.1 198.4h0M508 197.7h0M515.6 198h0M559.8 211.2h0M534.5 204.9h0M532.6 212.7h0M551.1 226.1h0M537.8 225.1h0M616.1 217.2h0M643.1 218.4h0M636.6 230h0M623.1 230.4h0M137.4 213.6h0M114.1 202.4h0M114.2 208.4h0M125.1 215.2h0M160.2 207.9h0M162.7 222.9h0M136.9 224.8h0M272.1 193.3h0M297.3 205.2h0M279.3 203.4h0M461.9 195.7h0M470 200.4h0M455.7 205.4h0M465.4 207.8h0M499.7 202.7h0M484.8 202.2h0M488.7 208.5h0M498.5 207.2h0M515.1 202.4h0M513 210.1h0M505.6 208.4h0M588.5 213.2h0M595.6 229h0M607.4 229.5h0M743.8 223h0M718.7 219.6h0M739 236h0M725.1 234.4h0M795.6 223.8h0M821.3 227h0M818 240.6h0M804.4 238.8h0M885.6 215.3h0M870.9 221.7h0M885.9 222.8h0M877.1 227.1h0M890.4 221.8h0M104.1 206.1h0M238 193.7h0M264.3 202.4h0M246.7 200.4h0M288.2 213h0M296 224.7h0M310.4 225.6h0M361.1 203.8h0M344.5 214.4h0M355.8 216.1h0M482.7 208.4h0M473.1 209.4h0M568.1 227.3h0M579.6 228.1h0M669.1 219.5h0M649.7 231.5h0M663.2 231.4h0M769.5 224.3h0M777.8 237.1h0M791.8 238.7h0M847.5 223.6h0M859.6 237.4h0M869.6 229.5h0M890.3 236.2h0M884 234h0M172.4 209.6h0M521 208.4h0M511.6 216.4h0M512.2 226.4h0M525.6 228.6h0M573.2 239.7h0M546.1 238.8h0M767.1 236.2h0M753.8 236.5h0M104.1 221.7h0M113.3 228.5h0M113.7 219.1h0M221.2 211.3h0M229.4 202.5h0M211.1 209.2h0M255.5 209.2h0M277.8 223.1h0M263.9 222.1h0M388.3 205.8h0M369.1 218.3h0M379.3 217.9h0M406.9 221.1h0M395.5 219.2h0M414.6 216.9h0M476.5 217h0M494.7 216.3h0M480.9 226.6h0M496.6 225.9h0M600.5 241.1h0M699.4 233.3h0M694.2 218.6h0M713.6 234.9h0M762.4 249.4h0M789.1 250.8h0M830.4 240h0M845.5 237.3h0M890.6 250.5h0M884.2 239h0M884.9 247.2h0M230.7 217.1h0M211.6 225.4h0M238.9 229.8h0M247.9 218.3h0M270.2 230.1h0M302.1 232.2h0M451.6 223.7h0M458.1 214.2h0M439.7 220.1h0M460 226.8h0M439.9 230.1h0M464.5 235.8h0M687.5 233.7h0M681.8 245.8h0M708.7 249.2h0M676.1 232.9h0M735.7 247.9h0M842.3 253.7h0M815.9 252.5h0M885.9 255h0M890.9 264.5h0M187.5 220.9h0M349.5 230h0M327.5 229h0M373.8 232.5h0M398.2 232.4h0M419.4 232.7h0M471.2 227.4h0M504.9 225.8h0M654.9 243.6h0M627.6 244.7h0M865.2 242.8h0M863.8 257.7h0M867.3 253h0M879.1 244.7h0M874.8 259h0M880.3 267.6h0M433.4 290.8h0M417.7 297.4h0M407.4 284.7h0M491.7 239.2h0M511.6 291.4h0M484.6 289.3h0M486.1 305.3h0M499.9 305.6h0M519.1 237.6h0M734.2 304.5h0M706.9 303.8h0M724.1 316.9h0M710.7 316.7h0M883.6 262.1h0M119.1 266.8h0M106.4 269.5h0M117.1 275h0M145.6 273.1h0M139 285.4h0M119.3 283.6h0M205.9 277.8h0M176.2 275.5h0M183.9 289.6h0M196.4 289.7h0M229 290.2h0M235.5 279.3h0M213.3 290.5h0M352.2 286h0M379.9 287.4h0M375.8 300.3h0M360.7 298.5h0M431 301.3h0M459.2 292.8h0M460.4 304.4h0M445.3 309.5h0M651.8 299.4h0M623.5 298.6h0M631.7 311.9h0M642.2 310.4h0M738.5 316.2h0M762.7 303.1h0M753.2 317.6h0M847.1 309.1h0M819.2 306.5h0M842.5 320.6h0M827.4 322.4h0M870.8 305.2h0M867.1 315.4h0M854 319.9h0M885.9 300.1h0M878.8 312h0M884.5 307.8h0M108.2 285.4h0M152.9 285.1h0M169.4 287h0M241.4 290.7h0M249.6 306.1h0M219.5 302.2h0M241.4 318.3h0M225.6 315.4h0M323.8 284.4h0M332.9 297.5h0M348.4 297.5h0M539.8 295.5h0M531.8 306.3h0M514.4 304.8h0M568.2 294.9h0M546.1 308.3h0M560.9 308.7h0M587.8 311.6h0M595.9 298.2h0M575 310.5h0M679.9 302.1h0M670.1 314.1h0M659.2 311.3h0M683.7 314.9h0M699 316.6h0M891.6 305.6h0M127.9 297.2h0M151.3 311.9h0M136.7 307.3h0M160 301.1h0M265.2 278.3h0M258.2 291.5h0M270.9 292h0M294.7 282.2h0M289 293h0M404.2 299.2h0M402.2 313.2h0M412.6 323.6h0M429.7 316.4h0M473 302.6h0M520.7 318.3h0M551 322.7h0M527.2 331.9h0M542.2 334.4h0M603.5 312h0M581 323h0M590.4 338.4h0M609.7 324.2h0M605.3 339.1h0M617.6 311.2h0M791.1 307.4h0M813.6 320.9h0M796.9 319.9h0M862.9 329.2h0M882.9 318.4h0M874 331.4h0M882.1 325.9h0M118.9 303.5h0M105.7 301.8h0M141 319.3h0M165.8 315h0M143.3 336h0M171.6 326.4h0M150.6 337.7h0M163.8 336.8h0M258 318.9h0M280 307.4h0M272.9 317.2h0M303.5 295h0M316.7 296.6h0M391.4 300.1h0M489.1 316.2h0M456.9 319.4h0M482.9 328.8h0M465.9 330h0M499 331.2h0M511.8 332h0M573.7 337.1h0M556.9 334.6h0M663 324.4h0M689.2 328.8h0M663 339.9h0M679.3 341.8h0M716.5 329.6h0M745.3 331.3h0M723 344.5h0M737.2 342.1h0M834.9 335.7h0M858.5 345.3h0M862.9 336.4h0M841.1 347.2h0M890.8 321h0M114.3 313.5h0M116.8 322.4h0M128.8 328.7h0M189.3 300.9h0M182.5 314.6h0M210.4 315.7h0M195.1 315h0M234.1 328.8h0M264.7 330h0M241.3 342.3h0M250.9 343.9h0M258.5 343.1h0M372.2 311.7h0M398.5 326.1h0M383.2 326.1h0M566.5 347.6h0M574.6 360.9h0M591.1 361.1h0M599.6 349.6h0M583.6 362.7h0M636.7 322.3h0M637.2 336.1h0M621.3 338.9h0M650.3 335.7h0M769.3 318.4h0M784.9 318.7h0M826.8 348.9h0M805.1 333.5h0M812.8 348.2h0M871.3 350h0M850.1 361.2h0M875.9 357.9h0M870.1 365.6h0M860.4 371.4h0M883.3 335.3h0M883.3 340.6h0M882.1 347.3h0M890.9 335.2h0M106 319.1h0M819.5 361.7h0M827.8 373h0M834.4 375.4h0M845.6 372.1h0M889.6 349h0M117.3 336.9h0M107.8 336.8h0M203.1 326.8h0M225.5 339.1h0M215.1 339.9h0M310.7 309.7h0M288.9 319.2h0M301.7 321.5h0M341.4 312h0M335.6 322.4h0M317.1 321.6h0M368.1 324.1h0M350.9 324.5h0M425.8 329.5h0M394.1 338.9h0M413.4 350.8h0M423.3 347.8h0M402.9 347.2h0M450.6 335.4h0M437.7 340.4h0M505.3 344.7h0M476.1 344.7h0M486.4 355h0M495.8 355.6h0M535 347.6h0M521.4 356.9h0M511.2 355.4h0M692.2 344.2h0M707.1 344.9h0M118.8 345.8h0M139.7 345.1h0M123.8 351.4h0M132.5 352.1h0M275.2 342.1h0M284.1 342.6h0M294.9 333.6h0M664.1 353.6h0M632.4 349.1h0M644.5 361.5h0M652.6 362h0M775.2 331h0M767.3 343.3h0M750.4 342.1h0M795.7 347.2h0M780 344.2h0M788 359.8h0M795 370.3h0M810.1 372.3h0M801.1 373.4h0M889.7 361.5h0M881.1 363h0M105.1 353.3h0M114 352.6h0M178.4 338.1h0M197.8 340.5h0M187.8 340.3h0M240.5 354.8h0M220.2 349.8h0M228.4 359.4h0M233.8 360.2h0M250.7 363.8h0M259.9 355.5h0M243.5 361.6h0M258.5 362.5h0M360 338.1h0M367.4 346.7h0M379.3 350.7h0M387.8 347.5h0M448.4 349.3h0M458.5 355.6h0M471.4 354.7h0M538.8 359.2h0M548.4 360.1h0M558.2 358h0M696.6 358h0M668.7 364.1h0M686.9 366.9h0M677.1 367.8h0M705.4 368.2h0M727.8 355.4h0M715.3 369.9h0M722.7 369.5h0M779.7 367.4h0M757.5 355h0M764.9 368.9h0M769.9 372.2h0M884.4 370.7h0M889.9 374.7h0M159.5 347.7h0M140.3 354.8h0M148.1 357.4h0M152.9 357.3h0M180.5 349h0M170.4 357.2h0M163.8 355.4h0M177.9 356.4h0M199.9 350.6h0M204.5 359.3h0M211.1 359.1h0M216 359.5h0M326.8 334.2h0M333.9 345.3h0M344.5 349.2h0M352.4 346.1h0M427.3 361.5h0M407.3 360.3h0M409.8 369.7h0M424.2 370.4h0M416 372h0M447.6 361h0M432.4 367.1h0M440.7 367.2h0M535 369.2h0M529.5 376.7h0M514.5 368.9h0M522.1 376.3h0M554 369.7h0M538.3 379.5h0M544.8 379.6h0M551.2 378.5h0M573.1 373.5h0M559.9 377.8h0M566.2 379h0M793.1 382.5h0M777.7 383.8h0M786.2 389h0M809.5 384h0M827.4 386.7h0M822.8 392.1h0M816.2 392.7h0M112 362h0M193.6 359.7h0M186.4 358.2h0M245.1 370.4h0M258.8 371.4h0M279.4 355.1h0M273.2 362.6h0M268.2 361.9h0M283.9 361.9h0M290.8 363.3h0M298.5 358.1h0M299.6 343.9h0M463.7 373.8h0M468.8 367.6h0M449.8 371.9h0M457.2 375h0M537.4 387.2h0M524 385.2h0M550.3 386.2h0M609.5 362.1h0M591.9 374h0M610.9 372.9h0M599.1 380.2h0M603.6 380.8h0M627.8 361.5h0M619.3 364.3h0M648.2 374.8h0M629.2 375.9h0M643.6 381.7h0M637.2 382.1h0M654.5 383.4h0M667.9 376.3h0M659.3 383.6h0M685.7 377.5h0M690.5 385h0M697.1 386h0M704.7 380.5h0M749.6 366.5h0M737.2 367.2h0M744.3 378.6h0M750.5 386.9h0M762.3 383.7h0M756.4 389.4h0M799.3 394.9h0M794.4 394.1h0M805.5 395.1h0M829.8 394.8h0M845.7 387.5h0M835.7 396.9h0M843.6 395.5h0M882.9 377.3h0M865 376.5h0M874.2 380.7h0M882.1 386.9h0M890.3 387.8h0M165.3 365.1h0M177.8 365h0M204.8 367.7h0M191.2 365.2h0M217.6 368h0M286.7 370.5h0M272.5 370.8h0M301.6 366.7h0M300.4 373.8h0M307.8 347.1h0M316.9 357.1h0M308.2 367.2h0M315 365.9h0M317.7 345.8h0M334.4 360.3h0M322.7 364.3h0M332 364.9h0M351.5 359h0M339.8 369.1h0M347.8 368.7h0M368.9 361.8h0M354.8 366.3h0M361.3 366.6h0M388 362.3h0M372 370.2h0M378.9 371.2h0M385.5 369.7h0M401.6 367.6h0M394.7 368.1h0M397.7 376.5h0M410.8 378h0M423.5 378.3h0M436.6 378.8h0M474.9 374.3h0M462 382.9h0M474.3 383.1h0M491.6 367.7h0M481 374.8h0M485.5 374.4h0M499 375h0M503.3 376.2h0M511.1 374.6h0M577.1 382.2h0M583.8 382.8h0M588.5 382.9h0M613.5 382.6h0M621.8 384.8h0M626.9 384.6h0M641.4 390.5h0M655.1 391.1h0M682.7 386.7h0M669.6 387.2h0M674.5 387.9h0M694 393.9h0M681.2 395.5h0M706.5 387.5h0M706.1 396.7h0M724.1 381.8h0M712.6 389.9h0M720.5 388.7h0M742 387h0M730.4 388.7h0M736.2 389h0M742.5 396.4h0M754.1 398.3h0M766.1 394h0M772.7 394.4h0M777.7 394.1h0M792.5 401.4h0M805.5 402.9h0M818.1 401.1h0M830.9 402.7h0M859.2 393.6h0M863.5 388h0M851.1 393.4h0M868.3 397.6h0M855.8 404.3h0M868.9 404.5h0M881.2 393.1h0M873.3 398.4h0M881.8 399.5h0M888.3 400.2h0M126.1 361.7h0M139.3 362.6h0M152.3 364.9h0M231.1 367.2h0M314.3 374.7h0M328 374.6h0M342.9 376.3h0M357.6 375.2h0M371.3 376.2h0M384.4 377.1h0M449.5 379.7h0M486.6 383.2h0M498.6 383.9h0M511 383.5h0M563.5 388h0M576.7 389.6h0M589.8 390.4h0M602.3 388.8h0M615.4 390.4h0M628.1 391h0M668 394.9h0M718.5 396.4h0M731.1 396.7h0M767.3 399.7h0M780.3 401h0M843.2 403.5h0M881.9 407.2h0M90 168.5h0M90 175.5h0M90 182.5h0M90 189.5h0M90 196.5h0M90 203.5h0M90 210.5h0M90 217.5h0M90 224.5h0M90 231.5h0M90 238.5h0M90 245.5h0M90 252.5h0M90 259.5h0M90 266.5h0M90 273.5h0M90 280.5h0M90 287.5h0M90 294.5h0M90 301.5h0M90 308.5h0M90 315.5h0M90 322.5h0M90 329.5h0M90 336.5h0M90 343.5h0M90 350.5h0M90 357.5h0M90 364.5h0M904.2 205h0M900.8 208.8h0M904.2 212.6h0M900.8 216.4h0M904.2 220.2h0M900.8 224h0M904.2 227.8h0M900.8 231.6h0M904.2 235.4h0M900.8 239.2h0M904.2 243h0M900.8 246.8h0M904.2 250.6h0M900.8 254.4h0M904.2 258.2h0M900.8 262h0M904.2 265.8h0M900.8 269.6h0M904.2 273.4h0M900.8 277.2h0M904.2 281h0M900.8 284.8h0M904.2 288.6h0M900.8 292.4h0M904.2 296.2h0M900.8 300h0M904.2 303.8h0M900.8 307.6h0M904.2 311.4h0M900.8 315.2h0M904.2 319h0M900.8 322.8h0M904.2 326.6h0M900.8 330.4h0M904.2 334.2h0M900.8 338h0M904.2 341.8h0M900.8 345.6h0M904.2 349.4h0M900.8 353.2h0M904.2 357h0M900.8 360.8h0M904.2 364.6h0M900.8 368.4h0M904.2 372.2h0M900.8 376h0M904.2 379.8h0M900.8 383.6h0M904.2 387.4h0M900.8 391.2h0M904.2 395h0M900.8 398.8h0M904.2 402.6h0M900.8 406.4h0M904.2 410.2h0M900.8 414h0M904.2 417.8h0M900.8 421.6h0M99 161.6h0M113.3 162.2h0M127.6 162.8h0M141.9 163.5h0M156.2 164.1h0M170.5 164.8h0M184.8 165.4h0M199.1 166.1h0M213.4 166.7h0M227.7 167.4h0M242 168h0M256.3 168.6h0M270.6 169.3h0M284.9 169.9h0M299.2 170.6h0M313.5 171.2h0M327.8 171.9h0M342.1 172.5h0M356.4 173.1h0M370.7 173.8h0M385 174.4h0M399.3 175.1h0M413.6 175.7h0M427.9 176.4h0M442.2 177h0M456.5 177.6h0M470.8 178.3h0M485.1 178.9h0M499.4 179.6h0M513.7 180.2h0M528 180.9h0M542.3 181.5h0M556.6 182.1h0M570.9 182.8h0M585.2 183.4h0M599.5 184.1h0M613.8 184.7h0M628.1 185.4h0M642.4 186h0M656.7 186.7h0M671 187.3h0M685.3 187.9h0M699.6 188.6h0M713.9 189.2h0M728.2 189.9h0M742.5 190.5h0M756.8 191.2h0M771.1 191.8h0M785.4 192.4h0M799.7 193.1h0M814 193.7h0M828.3 194.4h0M842.6 195h0M856.9 195.7h0M871.2 196.3h0M885.5 196.9h0M899.8 197.6h0" stroke="#058a05" stroke-width="2.35" stroke-linecap="round" fill="none"/>
<path d="M457.5 181L457.5 194.5L510.5 197L510.5 183" stroke="#3a3a20" stroke-width="1.6" fill="none"/>
<path d="M459 101L514 101.8" stroke="#000" stroke-width="2.4"/>
<path d="M459 117L514 117.8" stroke="#000" stroke-width="2.4"/>
<path d="M459 133L514 133.8" stroke="#000" stroke-width="2.4"/>
<path d="M459 149.3L514 150.10000000000002" stroke="#000" stroke-width="2.4"/>
<path d="M459 166L514 166.8" stroke="#000" stroke-width="2.4"/>
<path d="M459 181L514 181.8" stroke="#000" stroke-width="2.4"/>
<path d="M486.4 101v80.5" stroke="#000" stroke-width="1"/>
<rect x="458.2" y="100.5" width="6" height="81.5" fill="#1010d8" stroke="#000" stroke-width="0.8"/>
<path d="M460.4 101v81M462.0 101v81" stroke="#000" stroke-width="0.6" stroke-dasharray="3 2"/>
<rect x="508.8" y="100.5" width="6" height="81.5" fill="#1010d8" stroke="#000" stroke-width="0.8"/>
<path d="M511.0 101v81M512.6 101v81" stroke="#000" stroke-width="0.6" stroke-dasharray="3 2"/>
<path d="M510.2 182v14" stroke="#2a3ad8" stroke-width="1.1"/>
<path d="M456.9 101h0M465.6 103h0M507.6 103h0M516 101h0M460.5 102.5h0M512 102h0M462.5 104.2h0M510.5 104h0M456.9 105h0M465.6 107h0M507.6 107h0M516 105h0M460.5 106.5h0M512 106h0M462.5 108.2h0M510.5 108h0M456.9 109h0M465.6 111h0M507.6 111h0M516 109h0M460.5 110.5h0M512 110h0M462.5 112.2h0M510.5 112h0M456.9 113h0M465.6 115h0M507.6 115h0M516 113h0M460.5 114.5h0M512 114h0M462.5 116.2h0M510.5 116h0M456.9 117h0M465.6 119h0M507.6 119h0M516 117h0M460.5 118.5h0M512 118h0M462.5 120.2h0M510.5 120h0M456.9 121h0M465.6 123h0M507.6 123h0M516 121h0M460.5 122.5h0M512 122h0M462.5 124.2h0M510.5 124h0M456.9 125h0M465.6 127h0M507.6 127h0M516 125h0M460.5 126.5h0M512 126h0M462.5 128.2h0M510.5 128h0M456.9 129h0M465.6 131h0M507.6 131h0M516 129h0M460.5 130.5h0M512 130h0M462.5 132.2h0M510.5 132h0M456.9 133h0M465.6 135h0M507.6 135h0M516 133h0M460.5 134.5h0M512 134h0M462.5 136.2h0M510.5 136h0M456.9 137h0M465.6 139h0M507.6 139h0M516 137h0M460.5 138.5h0M512 138h0M462.5 140.2h0M510.5 140h0M456.9 141h0M465.6 143h0M507.6 143h0M516 141h0M460.5 142.5h0M512 142h0M462.5 144.2h0M510.5 144h0M456.9 145h0M465.6 147h0M507.6 147h0M516 145h0M460.5 146.5h0M512 146h0M462.5 148.2h0M510.5 148h0M456.9 149h0M465.6 151h0M507.6 151h0M516 149h0M460.5 150.5h0M512 150h0M462.5 152.2h0M510.5 152h0M456.9 153h0M465.6 155h0M507.6 155h0M516 153h0M460.5 154.5h0M512 154h0M462.5 156.2h0M510.5 156h0M456.9 157h0M465.6 159h0M507.6 159h0M516 157h0M460.5 158.5h0M512 158h0M462.5 160.2h0M510.5 160h0M456.9 161h0M465.6 163h0M507.6 163h0M516 161h0M460.5 162.5h0M512 162h0M462.5 164.2h0M510.5 164h0M456.9 165h0M465.6 167h0M507.6 167h0M516 165h0M460.5 166.5h0M512 166h0M462.5 168.2h0M510.5 168h0M456.9 169h0M465.6 171h0M507.6 171h0M516 169h0M460.5 170.5h0M512 170h0M462.5 172.2h0M510.5 172h0M456.9 173h0M465.6 175h0M507.6 175h0M516 173h0M460.5 174.5h0M512 174h0M462.5 176.2h0M510.5 176h0M456.9 177h0M465.6 179h0M507.6 179h0M516 177h0M460.5 178.5h0M512 178h0M462.5 180.2h0M510.5 180h0M456.9 181h0M465.6 183h0M507.6 183h0M516 181h0M460.5 182.5h0M512 182h0M462.5 184.2h0M510.5 184h0M465.5 99.9h0M467.2 102.3h0M469 100.3h0M470.8 102.3h0M472.5 99.9h0M474.2 102.3h0M476 100.3h0M477.8 102.3h0M479.5 99.9h0M481.2 102.3h0M483 100.3h0M484.8 102.3h0M486.5 99.9h0M488.2 102.3h0M490 100.3h0M491.8 102.3h0M493.5 99.9h0M495.2 102.3h0M497 100.3h0M498.8 102.3h0M500.5 99.9h0M502.2 102.3h0M504 100.3h0M505.8 102.3h0M507.5 99.9h0M509.2 102.3h0M465.5 115.9h0M467.2 118.3h0M469 116.3h0M470.8 118.3h0M472.5 115.9h0M474.2 118.3h0M476 116.3h0M477.8 118.3h0M479.5 115.9h0M481.2 118.3h0M483 116.3h0M484.8 118.3h0M486.5 115.9h0M488.2 118.3h0M490 116.3h0M491.8 118.3h0M493.5 115.9h0M495.2 118.3h0M497 116.3h0M498.8 118.3h0M500.5 115.9h0M502.2 118.3h0M504 116.3h0M505.8 118.3h0M507.5 115.9h0M509.2 118.3h0M465.5 131.9h0M467.2 134.3h0M469 132.3h0M470.8 134.3h0M472.5 131.9h0M474.2 134.3h0M476 132.3h0M477.8 134.3h0M479.5 131.9h0M481.2 134.3h0M483 132.3h0M484.8 134.3h0M486.5 131.9h0M488.2 134.3h0M490 132.3h0M491.8 134.3h0M493.5 131.9h0M495.2 134.3h0M497 132.3h0M498.8 134.3h0M500.5 131.9h0M502.2 134.3h0M504 132.3h0M505.8 134.3h0M507.5 131.9h0M509.2 134.3h0M465.5 148.2h0M467.2 150.6h0M469 148.6h0M470.8 150.6h0M472.5 148.2h0M474.2 150.6h0M476 148.6h0M477.8 150.6h0M479.5 148.2h0M481.2 150.6h0M483 148.6h0M484.8 150.6h0M486.5 148.2h0M488.2 150.6h0M490 148.6h0M491.8 150.6h0M493.5 148.2h0M495.2 150.6h0M497 148.6h0M498.8 150.6h0M500.5 148.2h0M502.2 150.6h0M504 148.6h0M505.8 150.6h0M507.5 148.2h0M509.2 150.6h0M465.5 164.9h0M467.2 167.3h0M469 165.3h0M470.8 167.3h0M472.5 164.9h0M474.2 167.3h0M476 165.3h0M477.8 167.3h0M479.5 164.9h0M481.2 167.3h0M483 165.3h0M484.8 167.3h0M486.5 164.9h0M488.2 167.3h0M490 165.3h0M491.8 167.3h0M493.5 164.9h0M495.2 167.3h0M497 165.3h0M498.8 167.3h0M500.5 164.9h0M502.2 167.3h0M504 165.3h0M505.8 167.3h0M507.5 164.9h0M509.2 167.3h0M465.5 179.9h0M467.2 182.3h0M469 180.3h0M470.8 182.3h0M472.5 179.9h0M474.2 182.3h0M476 180.3h0M477.8 182.3h0M479.5 179.9h0M481.2 182.3h0M483 180.3h0M484.8 182.3h0M486.5 179.9h0M488.2 182.3h0M490 180.3h0M491.8 182.3h0M493.5 179.9h0M495.2 182.3h0M497 180.3h0M498.8 182.3h0M500.5 179.9h0M502.2 182.3h0M504 180.3h0M505.8 182.3h0M507.5 179.9h0M509.2 182.3h0" stroke="#0a8a0a" stroke-width="2.3" stroke-linecap="round" fill="none"/>
<path d="M464 183l10 12M474 183l-9 12M486 183l8 13M497 183l-9 13M500 184l9 12" stroke="#8e8a80" stroke-width="0.7"/>
<path d="M414.8 99.2L421 97.1L447 97.4L452.5 95.8L461.8 99.5L448.5 103.9L447.2 101.1L421 100.6z" fill="#0a84f8"/>
<path d="M961 462.5V441" stroke="#4a4af8" stroke-width="1.2"/><path d="M959.2 442l1.8-4.5 1.8 4.5z" fill="#2020f0"/>
<path d="M961 462.5L981 463" stroke="#f03030" stroke-width="1.2"/><path d="M979.5 461l6 2-6 2z" fill="#f02020"/>
<path d="M961 462.5L966.5 459.2" stroke="#20a020" stroke-width="1.1"/><path d="M964.5 458.5l3-1.2-1 2.5z" fill="#109010"/>
</svg>
<div class="t" style="left:12px;top:2.8px;font-size:6.27px;color:#fff;font-weight:400;">PLAXIS 3D Ultimate Output - (&lt;New project&gt; - Generated mesh, Connectivity plot)</div>
<div class="t" style="left:15.5px;top:13.6px;font-size:6.3px;color:#000;font-weight:400;"><u>F</u>ile</div>
<div class="t" style="left:32.5px;top:13.6px;font-size:6.3px;color:#000;font-weight:400;"><u>V</u>iew</div>
<div class="t" style="left:52.5px;top:13.6px;font-size:6.3px;color:#000;font-weight:400;"><u>P</u>roject</div>
<div class="t" style="left:79px;top:13.6px;font-size:6.3px;color:#000;font-weight:400;"><u>G</u>eometry</div>
<div class="t" style="left:113.75px;top:13.6px;font-size:6.3px;color:#000;font-weight:400;"><u>M</u>esh</div>
<div class="t" style="left:135.75px;top:13.6px;font-size:6.3px;color:#000;font-weight:400;"><u>D</u>eformations</div>
<div class="t" style="left:180.75px;top:13.6px;font-size:6.3px;color:#000;font-weight:400;"><u>T</u>ools</div>
<div class="t" style="left:203px;top:13.6px;font-size:6.3px;color:#000;font-weight:400;"><u>O</u>ptions</div>
<div class="t" style="left:231.5px;top:13.6px;font-size:6.3px;color:#000;font-weight:400;">E<u>x</u>pert</div>
<div class="t" style="left:255.5px;top:13.6px;font-size:6.3px;color:#000;font-weight:400;"><u>W</u>indow</div>
<div class="t" style="left:285.5px;top:13.6px;font-size:6.3px;color:#000;font-weight:400;"><u>H</u>elp</div>
<div class="t" style="left:12.8px;top:42.6px;font-size:6.25px;color:#fff;font-weight:700;">Output</div>
<div class="t" style="left:55.8px;top:42.6px;font-size:6.3px;color:#e8f6e0;font-weight:400;">Close</div>
<div class="t" style="left:483.2px;top:517.2px;font-size:6.16px;color:#000;font-weight:700;">Connectivity plot</div>
<div class="t" style="left:123.7px;top:554.2px;font-size:6.7px;color:#000;font-weight:400;transform:scaleX(0.8627);transform-origin:0 0">-14,745 -47,355 -38,200</div>
<div class="t" style="left:227.6px;top:554.2px;font-size:6.7px;color:#000;font-weight:400;transform:scaleX(0.8762);transform-origin:0 0">Viewpoint (297,977 -824,935 113,699)</div>
<div class="ax" style="left:958.5px;top:428px">Z</div>
<div class="ax" style="left:988.5px;top:460px">X</div>
<div class="ax" style="left:967px;top:455px;font-size:5px">Y</div>
</body></html>
